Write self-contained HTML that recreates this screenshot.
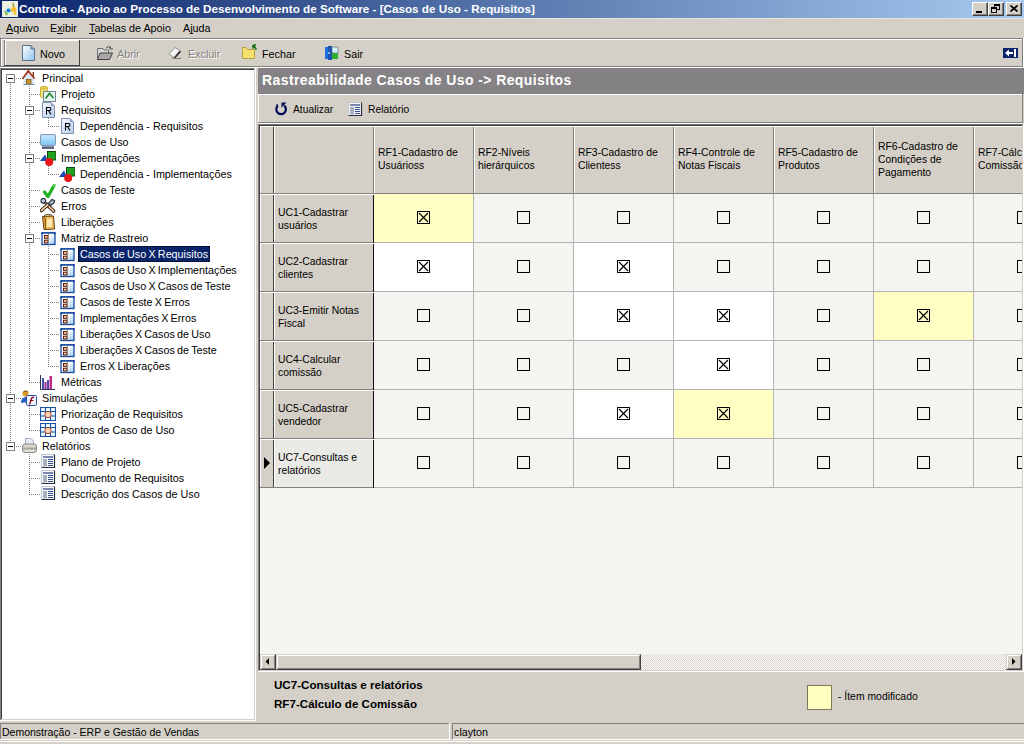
<!DOCTYPE html><html><head><meta charset="utf-8"><style>
*{margin:0;padding:0;box-sizing:border-box}
html,body{width:1024px;height:744px;overflow:hidden;background:#D4D0C8;font-family:"Liberation Sans",sans-serif;font-size:10.75px;color:#000}
.ab{position:absolute}
.t{position:absolute;white-space:nowrap;line-height:14px}
.ln{position:absolute}
</style></head><body>

<div class="ab" style="left:0;top:0;width:1024px;height:18px;background:linear-gradient(to right,#0A246A,#A6CAF0)"></div>
<div class="ab" style="left:0px;top:18px;width:1024px;height:1px;background:#E6E4DE"></div>
<div class="t" style="left:19px;top:2px;color:#fff;font-weight:bold;font-size:11.7px;line-height:14px">Controla - Apoio ao Processo de Desenvolvimento de Software - [Casos de Uso - Requisitos]</div>
<svg class="ab" style="left:2px;top:1px" width="16" height="16"><rect width="16" height="16" fill="#EEF0E2"/><path d="M11 2 L12 8" stroke="#B0A040" stroke-width="1.6"/><ellipse cx="11.5" cy="8.5" rx="3" ry="2.6" fill="#F4C030"/><circle cx="13" cy="12.5" r="1.5" fill="#F0C838"/><path d="M3 10 L5 14" stroke="#80B040" stroke-width="2"/><circle cx="6.5" cy="9.5" r="2.8" fill="#B0F0F8" opacity="0.7"/><circle cx="6.5" cy="9.5" r="2" fill="#1A80D0"/></svg>
<div class="ab" style="left:972px;top:2px;width:16px;height:14px;background:#D4D0C8;border-top:1px solid #fff;border-left:1px solid #fff;border-right:1px solid #404040;border-bottom:1px solid #404040;box-shadow:inset -1px -1px #808080"></div>
<div class="ab" style="left:988px;top:2px;width:16px;height:14px;background:#D4D0C8;border-top:1px solid #fff;border-left:1px solid #fff;border-right:1px solid #404040;border-bottom:1px solid #404040;box-shadow:inset -1px -1px #808080"></div>
<div class="ab" style="left:1006px;top:2px;width:16px;height:14px;background:#D4D0C8;border-top:1px solid #fff;border-left:1px solid #fff;border-right:1px solid #404040;border-bottom:1px solid #404040;box-shadow:inset -1px -1px #808080"></div>
<div class="ab" style="left:976px;top:11px;width:6px;height:2px;background:#000"></div>
<div class="ab" style="left:994px;top:4px;width:6px;height:2px;background:#000"></div>
<div class="ab" style="left:994px;top:4px;width:1px;height:6px;background:#000"></div>
<div class="ab" style="left:999px;top:4px;width:1px;height:6px;background:#000"></div>
<div class="ab" style="left:994px;top:9px;width:6px;height:1px;background:#000"></div>
<div class="ab" style="left:991px;top:7px;width:6px;height:6px;background:#D4D0C8"></div>
<div class="ab" style="left:991px;top:7px;width:6px;height:2px;background:#000"></div>
<div class="ab" style="left:991px;top:7px;width:1px;height:6px;background:#000"></div>
<div class="ab" style="left:996px;top:7px;width:1px;height:6px;background:#000"></div>
<div class="ab" style="left:991px;top:12px;width:6px;height:1px;background:#000"></div>
<svg class="ab" style="left:1010px;top:5px" width="8" height="7"><path d="M0.5 0.5L7.5 6.5M7.5 0.5L0.5 6.5" stroke="#000" stroke-width="1.7"/></svg>
<div class="t" style="left:6px;top:21px">Aquivo</div>
<div class="t" style="left:50px;top:21px">Exibir</div>
<div class="t" style="left:89px;top:21px">Tabelas de Apoio</div>
<div class="t" style="left:183px;top:21px">Ajuda</div>
<div class="ab" style="left:6px;top:33px;width:7px;height:1px;background:#000"></div>
<div class="ab" style="left:57px;top:33px;width:6px;height:1px;background:#000"></div>
<div class="ab" style="left:89px;top:33px;width:6px;height:1px;background:#000"></div>
<div class="ab" style="left:190px;top:33px;width:3px;height:1px;background:#000"></div>
<div class="ab" style="left:0px;top:38px;width:1023px;height:1px;background:#808080"></div>
<div class="ab" style="left:1px;top:39px;width:1021px;height:1px;background:#fff"></div>
<div class="ab" style="left:0px;top:38px;width:1px;height:29px;background:#808080"></div>
<div class="ab" style="left:1px;top:39px;width:1px;height:27px;background:#fff"></div>
<div class="ab" style="left:0px;top:66px;width:1023px;height:1px;background:#808080"></div>
<div class="ab" style="left:0px;top:67px;width:1024px;height:1px;background:#fff"></div>
<div class="ab" style="left:1022px;top:38px;width:1px;height:29px;background:#808080"></div>
<div class="ab" style="left:1023px;top:38px;width:1px;height:30px;background:#fff"></div>
<div class="ab" style="left:4px;top:40px;width:1px;height:26px;background:#808080"></div>
<div class="ab" style="left:5px;top:40px;width:1px;height:25px;background:#fff"></div>
<div class="ab" style="left:5px;top:40px;width:74px;height:1px;background:#fff"></div>
<div class="ab" style="left:79px;top:40px;width:1px;height:26px;background:#404040"></div>
<div class="ab" style="left:4px;top:65px;width:76px;height:1px;background:#404040"></div>
<svg class="ab" style="left:22px;top:45px" width="14" height="16"><defs><linearGradient id="ng" x1="0" y1="0" x2="1" y2="1"><stop offset="0" stop-color="#fff"/><stop offset="1" stop-color="#8EC4EE"/></linearGradient></defs><path d="M0.5 0.5H9L12.5 4V15.5H0.5Z" fill="url(#ng)" stroke="#5A7090"/><path d="M9 0.5V4H12.5" fill="#9AB0C8" stroke="#5A7090"/></svg>
<div class="t" style="left:40px;top:47px">Novo</div>
<svg class="ab" style="left:97px;top:45px" width="17" height="16"><path d="M0.5 3.5H6L7 5H11.5V14.5H0.5Z" fill="#D8D8D8" stroke="#707070"/><path d="M0.5 14.5L3 8H15.5L12.5 14.5Z" fill="#A8A8A8" stroke="#404040"/><path d="M9 3 Q12 0 14 3" stroke="#505050" fill="none"/><path d="M13 1V4H16" stroke="#505050" fill="none"/></svg>
<div class="t" style="left:117px;top:47px;color:#808080;text-shadow:1px 1px #fff">Abrir</div>
<svg class="ab" style="left:168px;top:46px" width="15" height="13"><path d="M1 8 L7 1.5 L12 4.5 L6 11.5 Z" fill="#F4F4F4" stroke="#909090"/><path d="M12 4.5 L13 6 L7 12.5 L6 11.5Z" fill="#303030"/><path d="M4 12.5H13" stroke="#808080"/></svg>
<div class="t" style="left:188px;top:47px;color:#808080;text-shadow:1px 1px #fff">Excluir</div>
<svg class="ab" style="left:241px;top:44px" width="17" height="16"><path d="M1.5 6.5V3.5H5L6.5 5.5H13.5V14.5H1.5Z" fill="#F8E070" stroke="#B8A040"/><path d="M12.5 1.5 L15.5 5.5" stroke="#0A6A0A" stroke-width="1.5"/><path d="M12 1H15M12 1V4.5" stroke="#0A6A0A" stroke-width="1.5" fill="none"/><path d="M11 0 L16 0 L16 6" stroke="#A0E8A0" stroke-width="0.6" fill="none" opacity="0.6"/></svg>
<div class="t" style="left:262px;top:47px">Fechar</div>
<svg class="ab" style="left:325px;top:46px" width="14" height="14"><rect x="0" y="1" width="7" height="12" fill="#1A70E0"/><rect x="3" y="0" width="4" height="14" fill="#2050B0"/><rect x="7" y="1" width="6" height="6" fill="#D0F4FF" stroke="#4A6070" stroke-width="0.6"/><rect x="7" y="7" width="6" height="6" fill="#30B030"/><circle cx="4" cy="7" r="0.9" fill="#C0F0FF"/></svg>
<div class="t" style="left:344px;top:47px">Sair</div>
<svg class="ab" style="left:1003px;top:48px" width="15" height="10"><rect width="15" height="10" fill="#0A246A"/><path d="M3 5H10" stroke="#fff" stroke-width="2"/><path d="M2 5L6 1.5V8.5Z" fill="#fff"/><rect x="11" y="1" width="2" height="8" fill="#fff"/></svg>
<div class="ab" style="left:0px;top:68px;width:256px;height:653px;background:#fff"></div>
<div class="ab" style="left:0px;top:68px;width:256px;height:1px;background:#808080"></div>
<div class="ab" style="left:0px;top:68px;width:1px;height:653px;background:#808080"></div>
<div class="ab" style="left:1px;top:69px;width:254px;height:1px;background:#404040"></div>
<div class="ab" style="left:1px;top:69px;width:1px;height:651px;background:#404040"></div>
<div class="ab" style="left:255px;top:68px;width:1px;height:653px;background:#fff"></div>
<div class="ab" style="left:0px;top:720px;width:256px;height:1px;background:#fff"></div>
<div class="ab" style="left:254px;top:69px;width:1px;height:651px;background:#D4D0C8"></div>
<div class="ab" style="left:1px;top:719px;width:254px;height:1px;background:#D4D0C8"></div>
<div class="ab" style="left:10px;top:84px;width:1px;height:1px;background:#808080"></div>
<div class="ab" style="left:10px;top:86px;width:1px;height:1px;background:#808080"></div>
<div class="ab" style="left:10px;top:88px;width:1px;height:1px;background:#808080"></div>
<div class="ab" style="left:10px;top:90px;width:1px;height:1px;background:#808080"></div>
<div class="ab" style="left:10px;top:92px;width:1px;height:1px;background:#808080"></div>
<div class="ab" style="left:10px;top:94px;width:1px;height:1px;background:#808080"></div>
<div class="ab" style="left:10px;top:96px;width:1px;height:1px;background:#808080"></div>
<div class="ab" style="left:10px;top:98px;width:1px;height:1px;background:#808080"></div>
<div class="ab" style="left:10px;top:100px;width:1px;height:1px;background:#808080"></div>
<div class="ab" style="left:10px;top:102px;width:1px;height:1px;background:#808080"></div>
<div class="ab" style="left:10px;top:104px;width:1px;height:1px;background:#808080"></div>
<div class="ab" style="left:10px;top:106px;width:1px;height:1px;background:#808080"></div>
<div class="ab" style="left:10px;top:108px;width:1px;height:1px;background:#808080"></div>
<div class="ab" style="left:10px;top:110px;width:1px;height:1px;background:#808080"></div>
<div class="ab" style="left:10px;top:112px;width:1px;height:1px;background:#808080"></div>
<div class="ab" style="left:10px;top:114px;width:1px;height:1px;background:#808080"></div>
<div class="ab" style="left:10px;top:116px;width:1px;height:1px;background:#808080"></div>
<div class="ab" style="left:10px;top:118px;width:1px;height:1px;background:#808080"></div>
<div class="ab" style="left:10px;top:120px;width:1px;height:1px;background:#808080"></div>
<div class="ab" style="left:10px;top:122px;width:1px;height:1px;background:#808080"></div>
<div class="ab" style="left:10px;top:124px;width:1px;height:1px;background:#808080"></div>
<div class="ab" style="left:10px;top:126px;width:1px;height:1px;background:#808080"></div>
<div class="ab" style="left:10px;top:128px;width:1px;height:1px;background:#808080"></div>
<div class="ab" style="left:10px;top:130px;width:1px;height:1px;background:#808080"></div>
<div class="ab" style="left:10px;top:132px;width:1px;height:1px;background:#808080"></div>
<div class="ab" style="left:10px;top:134px;width:1px;height:1px;background:#808080"></div>
<div class="ab" style="left:10px;top:136px;width:1px;height:1px;background:#808080"></div>
<div class="ab" style="left:10px;top:138px;width:1px;height:1px;background:#808080"></div>
<div class="ab" style="left:10px;top:140px;width:1px;height:1px;background:#808080"></div>
<div class="ab" style="left:10px;top:142px;width:1px;height:1px;background:#808080"></div>
<div class="ab" style="left:10px;top:144px;width:1px;height:1px;background:#808080"></div>
<div class="ab" style="left:10px;top:146px;width:1px;height:1px;background:#808080"></div>
<div class="ab" style="left:10px;top:148px;width:1px;height:1px;background:#808080"></div>
<div class="ab" style="left:10px;top:150px;width:1px;height:1px;background:#808080"></div>
<div class="ab" style="left:10px;top:152px;width:1px;height:1px;background:#808080"></div>
<div class="ab" style="left:10px;top:154px;width:1px;height:1px;background:#808080"></div>
<div class="ab" style="left:10px;top:156px;width:1px;height:1px;background:#808080"></div>
<div class="ab" style="left:10px;top:158px;width:1px;height:1px;background:#808080"></div>
<div class="ab" style="left:10px;top:160px;width:1px;height:1px;background:#808080"></div>
<div class="ab" style="left:10px;top:162px;width:1px;height:1px;background:#808080"></div>
<div class="ab" style="left:10px;top:164px;width:1px;height:1px;background:#808080"></div>
<div class="ab" style="left:10px;top:166px;width:1px;height:1px;background:#808080"></div>
<div class="ab" style="left:10px;top:168px;width:1px;height:1px;background:#808080"></div>
<div class="ab" style="left:10px;top:170px;width:1px;height:1px;background:#808080"></div>
<div class="ab" style="left:10px;top:172px;width:1px;height:1px;background:#808080"></div>
<div class="ab" style="left:10px;top:174px;width:1px;height:1px;background:#808080"></div>
<div class="ab" style="left:10px;top:176px;width:1px;height:1px;background:#808080"></div>
<div class="ab" style="left:10px;top:178px;width:1px;height:1px;background:#808080"></div>
<div class="ab" style="left:10px;top:180px;width:1px;height:1px;background:#808080"></div>
<div class="ab" style="left:10px;top:182px;width:1px;height:1px;background:#808080"></div>
<div class="ab" style="left:10px;top:184px;width:1px;height:1px;background:#808080"></div>
<div class="ab" style="left:10px;top:186px;width:1px;height:1px;background:#808080"></div>
<div class="ab" style="left:10px;top:188px;width:1px;height:1px;background:#808080"></div>
<div class="ab" style="left:10px;top:190px;width:1px;height:1px;background:#808080"></div>
<div class="ab" style="left:10px;top:192px;width:1px;height:1px;background:#808080"></div>
<div class="ab" style="left:10px;top:194px;width:1px;height:1px;background:#808080"></div>
<div class="ab" style="left:10px;top:196px;width:1px;height:1px;background:#808080"></div>
<div class="ab" style="left:10px;top:198px;width:1px;height:1px;background:#808080"></div>
<div class="ab" style="left:10px;top:200px;width:1px;height:1px;background:#808080"></div>
<div class="ab" style="left:10px;top:202px;width:1px;height:1px;background:#808080"></div>
<div class="ab" style="left:10px;top:204px;width:1px;height:1px;background:#808080"></div>
<div class="ab" style="left:10px;top:206px;width:1px;height:1px;background:#808080"></div>
<div class="ab" style="left:10px;top:208px;width:1px;height:1px;background:#808080"></div>
<div class="ab" style="left:10px;top:210px;width:1px;height:1px;background:#808080"></div>
<div class="ab" style="left:10px;top:212px;width:1px;height:1px;background:#808080"></div>
<div class="ab" style="left:10px;top:214px;width:1px;height:1px;background:#808080"></div>
<div class="ab" style="left:10px;top:216px;width:1px;height:1px;background:#808080"></div>
<div class="ab" style="left:10px;top:218px;width:1px;height:1px;background:#808080"></div>
<div class="ab" style="left:10px;top:220px;width:1px;height:1px;background:#808080"></div>
<div class="ab" style="left:10px;top:222px;width:1px;height:1px;background:#808080"></div>
<div class="ab" style="left:10px;top:224px;width:1px;height:1px;background:#808080"></div>
<div class="ab" style="left:10px;top:226px;width:1px;height:1px;background:#808080"></div>
<div class="ab" style="left:10px;top:228px;width:1px;height:1px;background:#808080"></div>
<div class="ab" style="left:10px;top:230px;width:1px;height:1px;background:#808080"></div>
<div class="ab" style="left:10px;top:232px;width:1px;height:1px;background:#808080"></div>
<div class="ab" style="left:10px;top:234px;width:1px;height:1px;background:#808080"></div>
<div class="ab" style="left:10px;top:236px;width:1px;height:1px;background:#808080"></div>
<div class="ab" style="left:10px;top:238px;width:1px;height:1px;background:#808080"></div>
<div class="ab" style="left:10px;top:240px;width:1px;height:1px;background:#808080"></div>
<div class="ab" style="left:10px;top:242px;width:1px;height:1px;background:#808080"></div>
<div class="ab" style="left:10px;top:244px;width:1px;height:1px;background:#808080"></div>
<div class="ab" style="left:10px;top:246px;width:1px;height:1px;background:#808080"></div>
<div class="ab" style="left:10px;top:248px;width:1px;height:1px;background:#808080"></div>
<div class="ab" style="left:10px;top:250px;width:1px;height:1px;background:#808080"></div>
<div class="ab" style="left:10px;top:252px;width:1px;height:1px;background:#808080"></div>
<div class="ab" style="left:10px;top:254px;width:1px;height:1px;background:#808080"></div>
<div class="ab" style="left:10px;top:256px;width:1px;height:1px;background:#808080"></div>
<div class="ab" style="left:10px;top:258px;width:1px;height:1px;background:#808080"></div>
<div class="ab" style="left:10px;top:260px;width:1px;height:1px;background:#808080"></div>
<div class="ab" style="left:10px;top:262px;width:1px;height:1px;background:#808080"></div>
<div class="ab" style="left:10px;top:264px;width:1px;height:1px;background:#808080"></div>
<div class="ab" style="left:10px;top:266px;width:1px;height:1px;background:#808080"></div>
<div class="ab" style="left:10px;top:268px;width:1px;height:1px;background:#808080"></div>
<div class="ab" style="left:10px;top:270px;width:1px;height:1px;background:#808080"></div>
<div class="ab" style="left:10px;top:272px;width:1px;height:1px;background:#808080"></div>
<div class="ab" style="left:10px;top:274px;width:1px;height:1px;background:#808080"></div>
<div class="ab" style="left:10px;top:276px;width:1px;height:1px;background:#808080"></div>
<div class="ab" style="left:10px;top:278px;width:1px;height:1px;background:#808080"></div>
<div class="ab" style="left:10px;top:280px;width:1px;height:1px;background:#808080"></div>
<div class="ab" style="left:10px;top:282px;width:1px;height:1px;background:#808080"></div>
<div class="ab" style="left:10px;top:284px;width:1px;height:1px;background:#808080"></div>
<div class="ab" style="left:10px;top:286px;width:1px;height:1px;background:#808080"></div>
<div class="ab" style="left:10px;top:288px;width:1px;height:1px;background:#808080"></div>
<div class="ab" style="left:10px;top:290px;width:1px;height:1px;background:#808080"></div>
<div class="ab" style="left:10px;top:292px;width:1px;height:1px;background:#808080"></div>
<div class="ab" style="left:10px;top:294px;width:1px;height:1px;background:#808080"></div>
<div class="ab" style="left:10px;top:296px;width:1px;height:1px;background:#808080"></div>
<div class="ab" style="left:10px;top:298px;width:1px;height:1px;background:#808080"></div>
<div class="ab" style="left:10px;top:300px;width:1px;height:1px;background:#808080"></div>
<div class="ab" style="left:10px;top:302px;width:1px;height:1px;background:#808080"></div>
<div class="ab" style="left:10px;top:304px;width:1px;height:1px;background:#808080"></div>
<div class="ab" style="left:10px;top:306px;width:1px;height:1px;background:#808080"></div>
<div class="ab" style="left:10px;top:308px;width:1px;height:1px;background:#808080"></div>
<div class="ab" style="left:10px;top:310px;width:1px;height:1px;background:#808080"></div>
<div class="ab" style="left:10px;top:312px;width:1px;height:1px;background:#808080"></div>
<div class="ab" style="left:10px;top:314px;width:1px;height:1px;background:#808080"></div>
<div class="ab" style="left:10px;top:316px;width:1px;height:1px;background:#808080"></div>
<div class="ab" style="left:10px;top:318px;width:1px;height:1px;background:#808080"></div>
<div class="ab" style="left:10px;top:320px;width:1px;height:1px;background:#808080"></div>
<div class="ab" style="left:10px;top:322px;width:1px;height:1px;background:#808080"></div>
<div class="ab" style="left:10px;top:324px;width:1px;height:1px;background:#808080"></div>
<div class="ab" style="left:10px;top:326px;width:1px;height:1px;background:#808080"></div>
<div class="ab" style="left:10px;top:328px;width:1px;height:1px;background:#808080"></div>
<div class="ab" style="left:10px;top:330px;width:1px;height:1px;background:#808080"></div>
<div class="ab" style="left:10px;top:332px;width:1px;height:1px;background:#808080"></div>
<div class="ab" style="left:10px;top:334px;width:1px;height:1px;background:#808080"></div>
<div class="ab" style="left:10px;top:336px;width:1px;height:1px;background:#808080"></div>
<div class="ab" style="left:10px;top:338px;width:1px;height:1px;background:#808080"></div>
<div class="ab" style="left:10px;top:340px;width:1px;height:1px;background:#808080"></div>
<div class="ab" style="left:10px;top:342px;width:1px;height:1px;background:#808080"></div>
<div class="ab" style="left:10px;top:344px;width:1px;height:1px;background:#808080"></div>
<div class="ab" style="left:10px;top:346px;width:1px;height:1px;background:#808080"></div>
<div class="ab" style="left:10px;top:348px;width:1px;height:1px;background:#808080"></div>
<div class="ab" style="left:10px;top:350px;width:1px;height:1px;background:#808080"></div>
<div class="ab" style="left:10px;top:352px;width:1px;height:1px;background:#808080"></div>
<div class="ab" style="left:10px;top:354px;width:1px;height:1px;background:#808080"></div>
<div class="ab" style="left:10px;top:356px;width:1px;height:1px;background:#808080"></div>
<div class="ab" style="left:10px;top:358px;width:1px;height:1px;background:#808080"></div>
<div class="ab" style="left:10px;top:360px;width:1px;height:1px;background:#808080"></div>
<div class="ab" style="left:10px;top:362px;width:1px;height:1px;background:#808080"></div>
<div class="ab" style="left:10px;top:364px;width:1px;height:1px;background:#808080"></div>
<div class="ab" style="left:10px;top:366px;width:1px;height:1px;background:#808080"></div>
<div class="ab" style="left:10px;top:368px;width:1px;height:1px;background:#808080"></div>
<div class="ab" style="left:10px;top:370px;width:1px;height:1px;background:#808080"></div>
<div class="ab" style="left:10px;top:372px;width:1px;height:1px;background:#808080"></div>
<div class="ab" style="left:10px;top:374px;width:1px;height:1px;background:#808080"></div>
<div class="ab" style="left:10px;top:376px;width:1px;height:1px;background:#808080"></div>
<div class="ab" style="left:10px;top:378px;width:1px;height:1px;background:#808080"></div>
<div class="ab" style="left:10px;top:380px;width:1px;height:1px;background:#808080"></div>
<div class="ab" style="left:10px;top:382px;width:1px;height:1px;background:#808080"></div>
<div class="ab" style="left:10px;top:384px;width:1px;height:1px;background:#808080"></div>
<div class="ab" style="left:10px;top:386px;width:1px;height:1px;background:#808080"></div>
<div class="ab" style="left:10px;top:388px;width:1px;height:1px;background:#808080"></div>
<div class="ab" style="left:10px;top:390px;width:1px;height:1px;background:#808080"></div>
<div class="ab" style="left:10px;top:392px;width:1px;height:1px;background:#808080"></div>
<div class="ab" style="left:10px;top:394px;width:1px;height:1px;background:#808080"></div>
<div class="ab" style="left:10px;top:396px;width:1px;height:1px;background:#808080"></div>
<div class="ab" style="left:10px;top:398px;width:1px;height:1px;background:#808080"></div>
<div class="ab" style="left:10px;top:400px;width:1px;height:1px;background:#808080"></div>
<div class="ab" style="left:10px;top:402px;width:1px;height:1px;background:#808080"></div>
<div class="ab" style="left:10px;top:404px;width:1px;height:1px;background:#808080"></div>
<div class="ab" style="left:10px;top:406px;width:1px;height:1px;background:#808080"></div>
<div class="ab" style="left:10px;top:408px;width:1px;height:1px;background:#808080"></div>
<div class="ab" style="left:10px;top:410px;width:1px;height:1px;background:#808080"></div>
<div class="ab" style="left:10px;top:412px;width:1px;height:1px;background:#808080"></div>
<div class="ab" style="left:10px;top:414px;width:1px;height:1px;background:#808080"></div>
<div class="ab" style="left:10px;top:416px;width:1px;height:1px;background:#808080"></div>
<div class="ab" style="left:10px;top:418px;width:1px;height:1px;background:#808080"></div>
<div class="ab" style="left:10px;top:420px;width:1px;height:1px;background:#808080"></div>
<div class="ab" style="left:10px;top:422px;width:1px;height:1px;background:#808080"></div>
<div class="ab" style="left:10px;top:424px;width:1px;height:1px;background:#808080"></div>
<div class="ab" style="left:10px;top:426px;width:1px;height:1px;background:#808080"></div>
<div class="ab" style="left:10px;top:428px;width:1px;height:1px;background:#808080"></div>
<div class="ab" style="left:10px;top:430px;width:1px;height:1px;background:#808080"></div>
<div class="ab" style="left:10px;top:432px;width:1px;height:1px;background:#808080"></div>
<div class="ab" style="left:10px;top:434px;width:1px;height:1px;background:#808080"></div>
<div class="ab" style="left:10px;top:436px;width:1px;height:1px;background:#808080"></div>
<div class="ab" style="left:10px;top:438px;width:1px;height:1px;background:#808080"></div>
<div class="ab" style="left:10px;top:440px;width:1px;height:1px;background:#808080"></div>
<div class="ab" style="left:16px;top:78px;width:1px;height:1px;background:#808080"></div>
<div class="ab" style="left:18px;top:78px;width:1px;height:1px;background:#808080"></div>
<div class="ab" style="left:20px;top:78px;width:1px;height:1px;background:#808080"></div>
<div class="ab" style="left:16px;top:398px;width:1px;height:1px;background:#808080"></div>
<div class="ab" style="left:18px;top:398px;width:1px;height:1px;background:#808080"></div>
<div class="ab" style="left:20px;top:398px;width:1px;height:1px;background:#808080"></div>
<div class="ab" style="left:16px;top:446px;width:1px;height:1px;background:#808080"></div>
<div class="ab" style="left:18px;top:446px;width:1px;height:1px;background:#808080"></div>
<div class="ab" style="left:20px;top:446px;width:1px;height:1px;background:#808080"></div>
<div class="ab" style="left:29px;top:86px;width:1px;height:1px;background:#808080"></div>
<div class="ab" style="left:29px;top:88px;width:1px;height:1px;background:#808080"></div>
<div class="ab" style="left:29px;top:90px;width:1px;height:1px;background:#808080"></div>
<div class="ab" style="left:29px;top:92px;width:1px;height:1px;background:#808080"></div>
<div class="ab" style="left:29px;top:94px;width:1px;height:1px;background:#808080"></div>
<div class="ab" style="left:29px;top:96px;width:1px;height:1px;background:#808080"></div>
<div class="ab" style="left:29px;top:98px;width:1px;height:1px;background:#808080"></div>
<div class="ab" style="left:29px;top:100px;width:1px;height:1px;background:#808080"></div>
<div class="ab" style="left:29px;top:102px;width:1px;height:1px;background:#808080"></div>
<div class="ab" style="left:29px;top:104px;width:1px;height:1px;background:#808080"></div>
<div class="ab" style="left:29px;top:106px;width:1px;height:1px;background:#808080"></div>
<div class="ab" style="left:29px;top:108px;width:1px;height:1px;background:#808080"></div>
<div class="ab" style="left:29px;top:110px;width:1px;height:1px;background:#808080"></div>
<div class="ab" style="left:29px;top:112px;width:1px;height:1px;background:#808080"></div>
<div class="ab" style="left:29px;top:114px;width:1px;height:1px;background:#808080"></div>
<div class="ab" style="left:29px;top:116px;width:1px;height:1px;background:#808080"></div>
<div class="ab" style="left:29px;top:118px;width:1px;height:1px;background:#808080"></div>
<div class="ab" style="left:29px;top:120px;width:1px;height:1px;background:#808080"></div>
<div class="ab" style="left:29px;top:122px;width:1px;height:1px;background:#808080"></div>
<div class="ab" style="left:29px;top:124px;width:1px;height:1px;background:#808080"></div>
<div class="ab" style="left:29px;top:126px;width:1px;height:1px;background:#808080"></div>
<div class="ab" style="left:29px;top:128px;width:1px;height:1px;background:#808080"></div>
<div class="ab" style="left:29px;top:130px;width:1px;height:1px;background:#808080"></div>
<div class="ab" style="left:29px;top:132px;width:1px;height:1px;background:#808080"></div>
<div class="ab" style="left:29px;top:134px;width:1px;height:1px;background:#808080"></div>
<div class="ab" style="left:29px;top:136px;width:1px;height:1px;background:#808080"></div>
<div class="ab" style="left:29px;top:138px;width:1px;height:1px;background:#808080"></div>
<div class="ab" style="left:29px;top:140px;width:1px;height:1px;background:#808080"></div>
<div class="ab" style="left:29px;top:142px;width:1px;height:1px;background:#808080"></div>
<div class="ab" style="left:29px;top:144px;width:1px;height:1px;background:#808080"></div>
<div class="ab" style="left:29px;top:146px;width:1px;height:1px;background:#808080"></div>
<div class="ab" style="left:29px;top:148px;width:1px;height:1px;background:#808080"></div>
<div class="ab" style="left:29px;top:150px;width:1px;height:1px;background:#808080"></div>
<div class="ab" style="left:29px;top:152px;width:1px;height:1px;background:#808080"></div>
<div class="ab" style="left:29px;top:154px;width:1px;height:1px;background:#808080"></div>
<div class="ab" style="left:29px;top:156px;width:1px;height:1px;background:#808080"></div>
<div class="ab" style="left:29px;top:158px;width:1px;height:1px;background:#808080"></div>
<div class="ab" style="left:29px;top:160px;width:1px;height:1px;background:#808080"></div>
<div class="ab" style="left:29px;top:162px;width:1px;height:1px;background:#808080"></div>
<div class="ab" style="left:29px;top:164px;width:1px;height:1px;background:#808080"></div>
<div class="ab" style="left:29px;top:166px;width:1px;height:1px;background:#808080"></div>
<div class="ab" style="left:29px;top:168px;width:1px;height:1px;background:#808080"></div>
<div class="ab" style="left:29px;top:170px;width:1px;height:1px;background:#808080"></div>
<div class="ab" style="left:29px;top:172px;width:1px;height:1px;background:#808080"></div>
<div class="ab" style="left:29px;top:174px;width:1px;height:1px;background:#808080"></div>
<div class="ab" style="left:29px;top:176px;width:1px;height:1px;background:#808080"></div>
<div class="ab" style="left:29px;top:178px;width:1px;height:1px;background:#808080"></div>
<div class="ab" style="left:29px;top:180px;width:1px;height:1px;background:#808080"></div>
<div class="ab" style="left:29px;top:182px;width:1px;height:1px;background:#808080"></div>
<div class="ab" style="left:29px;top:184px;width:1px;height:1px;background:#808080"></div>
<div class="ab" style="left:29px;top:186px;width:1px;height:1px;background:#808080"></div>
<div class="ab" style="left:29px;top:188px;width:1px;height:1px;background:#808080"></div>
<div class="ab" style="left:29px;top:190px;width:1px;height:1px;background:#808080"></div>
<div class="ab" style="left:29px;top:192px;width:1px;height:1px;background:#808080"></div>
<div class="ab" style="left:29px;top:194px;width:1px;height:1px;background:#808080"></div>
<div class="ab" style="left:29px;top:196px;width:1px;height:1px;background:#808080"></div>
<div class="ab" style="left:29px;top:198px;width:1px;height:1px;background:#808080"></div>
<div class="ab" style="left:29px;top:200px;width:1px;height:1px;background:#808080"></div>
<div class="ab" style="left:29px;top:202px;width:1px;height:1px;background:#808080"></div>
<div class="ab" style="left:29px;top:204px;width:1px;height:1px;background:#808080"></div>
<div class="ab" style="left:29px;top:206px;width:1px;height:1px;background:#808080"></div>
<div class="ab" style="left:29px;top:208px;width:1px;height:1px;background:#808080"></div>
<div class="ab" style="left:29px;top:210px;width:1px;height:1px;background:#808080"></div>
<div class="ab" style="left:29px;top:212px;width:1px;height:1px;background:#808080"></div>
<div class="ab" style="left:29px;top:214px;width:1px;height:1px;background:#808080"></div>
<div class="ab" style="left:29px;top:216px;width:1px;height:1px;background:#808080"></div>
<div class="ab" style="left:29px;top:218px;width:1px;height:1px;background:#808080"></div>
<div class="ab" style="left:29px;top:220px;width:1px;height:1px;background:#808080"></div>
<div class="ab" style="left:29px;top:222px;width:1px;height:1px;background:#808080"></div>
<div class="ab" style="left:29px;top:224px;width:1px;height:1px;background:#808080"></div>
<div class="ab" style="left:29px;top:226px;width:1px;height:1px;background:#808080"></div>
<div class="ab" style="left:29px;top:228px;width:1px;height:1px;background:#808080"></div>
<div class="ab" style="left:29px;top:230px;width:1px;height:1px;background:#808080"></div>
<div class="ab" style="left:29px;top:232px;width:1px;height:1px;background:#808080"></div>
<div class="ab" style="left:29px;top:234px;width:1px;height:1px;background:#808080"></div>
<div class="ab" style="left:29px;top:236px;width:1px;height:1px;background:#808080"></div>
<div class="ab" style="left:29px;top:238px;width:1px;height:1px;background:#808080"></div>
<div class="ab" style="left:29px;top:240px;width:1px;height:1px;background:#808080"></div>
<div class="ab" style="left:29px;top:242px;width:1px;height:1px;background:#808080"></div>
<div class="ab" style="left:29px;top:244px;width:1px;height:1px;background:#808080"></div>
<div class="ab" style="left:29px;top:246px;width:1px;height:1px;background:#808080"></div>
<div class="ab" style="left:29px;top:248px;width:1px;height:1px;background:#808080"></div>
<div class="ab" style="left:29px;top:250px;width:1px;height:1px;background:#808080"></div>
<div class="ab" style="left:29px;top:252px;width:1px;height:1px;background:#808080"></div>
<div class="ab" style="left:29px;top:254px;width:1px;height:1px;background:#808080"></div>
<div class="ab" style="left:29px;top:256px;width:1px;height:1px;background:#808080"></div>
<div class="ab" style="left:29px;top:258px;width:1px;height:1px;background:#808080"></div>
<div class="ab" style="left:29px;top:260px;width:1px;height:1px;background:#808080"></div>
<div class="ab" style="left:29px;top:262px;width:1px;height:1px;background:#808080"></div>
<div class="ab" style="left:29px;top:264px;width:1px;height:1px;background:#808080"></div>
<div class="ab" style="left:29px;top:266px;width:1px;height:1px;background:#808080"></div>
<div class="ab" style="left:29px;top:268px;width:1px;height:1px;background:#808080"></div>
<div class="ab" style="left:29px;top:270px;width:1px;height:1px;background:#808080"></div>
<div class="ab" style="left:29px;top:272px;width:1px;height:1px;background:#808080"></div>
<div class="ab" style="left:29px;top:274px;width:1px;height:1px;background:#808080"></div>
<div class="ab" style="left:29px;top:276px;width:1px;height:1px;background:#808080"></div>
<div class="ab" style="left:29px;top:278px;width:1px;height:1px;background:#808080"></div>
<div class="ab" style="left:29px;top:280px;width:1px;height:1px;background:#808080"></div>
<div class="ab" style="left:29px;top:282px;width:1px;height:1px;background:#808080"></div>
<div class="ab" style="left:29px;top:284px;width:1px;height:1px;background:#808080"></div>
<div class="ab" style="left:29px;top:286px;width:1px;height:1px;background:#808080"></div>
<div class="ab" style="left:29px;top:288px;width:1px;height:1px;background:#808080"></div>
<div class="ab" style="left:29px;top:290px;width:1px;height:1px;background:#808080"></div>
<div class="ab" style="left:29px;top:292px;width:1px;height:1px;background:#808080"></div>
<div class="ab" style="left:29px;top:294px;width:1px;height:1px;background:#808080"></div>
<div class="ab" style="left:29px;top:296px;width:1px;height:1px;background:#808080"></div>
<div class="ab" style="left:29px;top:298px;width:1px;height:1px;background:#808080"></div>
<div class="ab" style="left:29px;top:300px;width:1px;height:1px;background:#808080"></div>
<div class="ab" style="left:29px;top:302px;width:1px;height:1px;background:#808080"></div>
<div class="ab" style="left:29px;top:304px;width:1px;height:1px;background:#808080"></div>
<div class="ab" style="left:29px;top:306px;width:1px;height:1px;background:#808080"></div>
<div class="ab" style="left:29px;top:308px;width:1px;height:1px;background:#808080"></div>
<div class="ab" style="left:29px;top:310px;width:1px;height:1px;background:#808080"></div>
<div class="ab" style="left:29px;top:312px;width:1px;height:1px;background:#808080"></div>
<div class="ab" style="left:29px;top:314px;width:1px;height:1px;background:#808080"></div>
<div class="ab" style="left:29px;top:316px;width:1px;height:1px;background:#808080"></div>
<div class="ab" style="left:29px;top:318px;width:1px;height:1px;background:#808080"></div>
<div class="ab" style="left:29px;top:320px;width:1px;height:1px;background:#808080"></div>
<div class="ab" style="left:29px;top:322px;width:1px;height:1px;background:#808080"></div>
<div class="ab" style="left:29px;top:324px;width:1px;height:1px;background:#808080"></div>
<div class="ab" style="left:29px;top:326px;width:1px;height:1px;background:#808080"></div>
<div class="ab" style="left:29px;top:328px;width:1px;height:1px;background:#808080"></div>
<div class="ab" style="left:29px;top:330px;width:1px;height:1px;background:#808080"></div>
<div class="ab" style="left:29px;top:332px;width:1px;height:1px;background:#808080"></div>
<div class="ab" style="left:29px;top:334px;width:1px;height:1px;background:#808080"></div>
<div class="ab" style="left:29px;top:336px;width:1px;height:1px;background:#808080"></div>
<div class="ab" style="left:29px;top:338px;width:1px;height:1px;background:#808080"></div>
<div class="ab" style="left:29px;top:340px;width:1px;height:1px;background:#808080"></div>
<div class="ab" style="left:29px;top:342px;width:1px;height:1px;background:#808080"></div>
<div class="ab" style="left:29px;top:344px;width:1px;height:1px;background:#808080"></div>
<div class="ab" style="left:29px;top:346px;width:1px;height:1px;background:#808080"></div>
<div class="ab" style="left:29px;top:348px;width:1px;height:1px;background:#808080"></div>
<div class="ab" style="left:29px;top:350px;width:1px;height:1px;background:#808080"></div>
<div class="ab" style="left:29px;top:352px;width:1px;height:1px;background:#808080"></div>
<div class="ab" style="left:29px;top:354px;width:1px;height:1px;background:#808080"></div>
<div class="ab" style="left:29px;top:356px;width:1px;height:1px;background:#808080"></div>
<div class="ab" style="left:29px;top:358px;width:1px;height:1px;background:#808080"></div>
<div class="ab" style="left:29px;top:360px;width:1px;height:1px;background:#808080"></div>
<div class="ab" style="left:29px;top:362px;width:1px;height:1px;background:#808080"></div>
<div class="ab" style="left:29px;top:364px;width:1px;height:1px;background:#808080"></div>
<div class="ab" style="left:29px;top:366px;width:1px;height:1px;background:#808080"></div>
<div class="ab" style="left:29px;top:368px;width:1px;height:1px;background:#808080"></div>
<div class="ab" style="left:29px;top:370px;width:1px;height:1px;background:#808080"></div>
<div class="ab" style="left:29px;top:372px;width:1px;height:1px;background:#808080"></div>
<div class="ab" style="left:29px;top:374px;width:1px;height:1px;background:#808080"></div>
<div class="ab" style="left:29px;top:376px;width:1px;height:1px;background:#808080"></div>
<div class="ab" style="left:29px;top:378px;width:1px;height:1px;background:#808080"></div>
<div class="ab" style="left:29px;top:380px;width:1px;height:1px;background:#808080"></div>
<div class="ab" style="left:29px;top:382px;width:1px;height:1px;background:#808080"></div>
<div class="ab" style="left:31px;top:94px;width:1px;height:1px;background:#808080"></div>
<div class="ab" style="left:33px;top:94px;width:1px;height:1px;background:#808080"></div>
<div class="ab" style="left:35px;top:94px;width:1px;height:1px;background:#808080"></div>
<div class="ab" style="left:37px;top:94px;width:1px;height:1px;background:#808080"></div>
<div class="ab" style="left:39px;top:94px;width:1px;height:1px;background:#808080"></div>
<div class="ab" style="left:35px;top:110px;width:1px;height:1px;background:#808080"></div>
<div class="ab" style="left:37px;top:110px;width:1px;height:1px;background:#808080"></div>
<div class="ab" style="left:39px;top:110px;width:1px;height:1px;background:#808080"></div>
<div class="ab" style="left:31px;top:142px;width:1px;height:1px;background:#808080"></div>
<div class="ab" style="left:33px;top:142px;width:1px;height:1px;background:#808080"></div>
<div class="ab" style="left:35px;top:142px;width:1px;height:1px;background:#808080"></div>
<div class="ab" style="left:37px;top:142px;width:1px;height:1px;background:#808080"></div>
<div class="ab" style="left:39px;top:142px;width:1px;height:1px;background:#808080"></div>
<div class="ab" style="left:35px;top:158px;width:1px;height:1px;background:#808080"></div>
<div class="ab" style="left:37px;top:158px;width:1px;height:1px;background:#808080"></div>
<div class="ab" style="left:39px;top:158px;width:1px;height:1px;background:#808080"></div>
<div class="ab" style="left:31px;top:190px;width:1px;height:1px;background:#808080"></div>
<div class="ab" style="left:33px;top:190px;width:1px;height:1px;background:#808080"></div>
<div class="ab" style="left:35px;top:190px;width:1px;height:1px;background:#808080"></div>
<div class="ab" style="left:37px;top:190px;width:1px;height:1px;background:#808080"></div>
<div class="ab" style="left:39px;top:190px;width:1px;height:1px;background:#808080"></div>
<div class="ab" style="left:31px;top:206px;width:1px;height:1px;background:#808080"></div>
<div class="ab" style="left:33px;top:206px;width:1px;height:1px;background:#808080"></div>
<div class="ab" style="left:35px;top:206px;width:1px;height:1px;background:#808080"></div>
<div class="ab" style="left:37px;top:206px;width:1px;height:1px;background:#808080"></div>
<div class="ab" style="left:39px;top:206px;width:1px;height:1px;background:#808080"></div>
<div class="ab" style="left:31px;top:222px;width:1px;height:1px;background:#808080"></div>
<div class="ab" style="left:33px;top:222px;width:1px;height:1px;background:#808080"></div>
<div class="ab" style="left:35px;top:222px;width:1px;height:1px;background:#808080"></div>
<div class="ab" style="left:37px;top:222px;width:1px;height:1px;background:#808080"></div>
<div class="ab" style="left:39px;top:222px;width:1px;height:1px;background:#808080"></div>
<div class="ab" style="left:35px;top:238px;width:1px;height:1px;background:#808080"></div>
<div class="ab" style="left:37px;top:238px;width:1px;height:1px;background:#808080"></div>
<div class="ab" style="left:39px;top:238px;width:1px;height:1px;background:#808080"></div>
<div class="ab" style="left:31px;top:382px;width:1px;height:1px;background:#808080"></div>
<div class="ab" style="left:33px;top:382px;width:1px;height:1px;background:#808080"></div>
<div class="ab" style="left:35px;top:382px;width:1px;height:1px;background:#808080"></div>
<div class="ab" style="left:37px;top:382px;width:1px;height:1px;background:#808080"></div>
<div class="ab" style="left:39px;top:382px;width:1px;height:1px;background:#808080"></div>
<div class="ab" style="left:29px;top:406px;width:1px;height:1px;background:#808080"></div>
<div class="ab" style="left:29px;top:408px;width:1px;height:1px;background:#808080"></div>
<div class="ab" style="left:29px;top:410px;width:1px;height:1px;background:#808080"></div>
<div class="ab" style="left:29px;top:412px;width:1px;height:1px;background:#808080"></div>
<div class="ab" style="left:29px;top:414px;width:1px;height:1px;background:#808080"></div>
<div class="ab" style="left:29px;top:416px;width:1px;height:1px;background:#808080"></div>
<div class="ab" style="left:29px;top:418px;width:1px;height:1px;background:#808080"></div>
<div class="ab" style="left:29px;top:420px;width:1px;height:1px;background:#808080"></div>
<div class="ab" style="left:29px;top:422px;width:1px;height:1px;background:#808080"></div>
<div class="ab" style="left:29px;top:424px;width:1px;height:1px;background:#808080"></div>
<div class="ab" style="left:29px;top:426px;width:1px;height:1px;background:#808080"></div>
<div class="ab" style="left:29px;top:428px;width:1px;height:1px;background:#808080"></div>
<div class="ab" style="left:29px;top:430px;width:1px;height:1px;background:#808080"></div>
<div class="ab" style="left:31px;top:414px;width:1px;height:1px;background:#808080"></div>
<div class="ab" style="left:33px;top:414px;width:1px;height:1px;background:#808080"></div>
<div class="ab" style="left:35px;top:414px;width:1px;height:1px;background:#808080"></div>
<div class="ab" style="left:37px;top:414px;width:1px;height:1px;background:#808080"></div>
<div class="ab" style="left:39px;top:414px;width:1px;height:1px;background:#808080"></div>
<div class="ab" style="left:31px;top:430px;width:1px;height:1px;background:#808080"></div>
<div class="ab" style="left:33px;top:430px;width:1px;height:1px;background:#808080"></div>
<div class="ab" style="left:35px;top:430px;width:1px;height:1px;background:#808080"></div>
<div class="ab" style="left:37px;top:430px;width:1px;height:1px;background:#808080"></div>
<div class="ab" style="left:39px;top:430px;width:1px;height:1px;background:#808080"></div>
<div class="ab" style="left:29px;top:454px;width:1px;height:1px;background:#808080"></div>
<div class="ab" style="left:29px;top:456px;width:1px;height:1px;background:#808080"></div>
<div class="ab" style="left:29px;top:458px;width:1px;height:1px;background:#808080"></div>
<div class="ab" style="left:29px;top:460px;width:1px;height:1px;background:#808080"></div>
<div class="ab" style="left:29px;top:462px;width:1px;height:1px;background:#808080"></div>
<div class="ab" style="left:29px;top:464px;width:1px;height:1px;background:#808080"></div>
<div class="ab" style="left:29px;top:466px;width:1px;height:1px;background:#808080"></div>
<div class="ab" style="left:29px;top:468px;width:1px;height:1px;background:#808080"></div>
<div class="ab" style="left:29px;top:470px;width:1px;height:1px;background:#808080"></div>
<div class="ab" style="left:29px;top:472px;width:1px;height:1px;background:#808080"></div>
<div class="ab" style="left:29px;top:474px;width:1px;height:1px;background:#808080"></div>
<div class="ab" style="left:29px;top:476px;width:1px;height:1px;background:#808080"></div>
<div class="ab" style="left:29px;top:478px;width:1px;height:1px;background:#808080"></div>
<div class="ab" style="left:29px;top:480px;width:1px;height:1px;background:#808080"></div>
<div class="ab" style="left:29px;top:482px;width:1px;height:1px;background:#808080"></div>
<div class="ab" style="left:29px;top:484px;width:1px;height:1px;background:#808080"></div>
<div class="ab" style="left:29px;top:486px;width:1px;height:1px;background:#808080"></div>
<div class="ab" style="left:29px;top:488px;width:1px;height:1px;background:#808080"></div>
<div class="ab" style="left:29px;top:490px;width:1px;height:1px;background:#808080"></div>
<div class="ab" style="left:29px;top:492px;width:1px;height:1px;background:#808080"></div>
<div class="ab" style="left:29px;top:494px;width:1px;height:1px;background:#808080"></div>
<div class="ab" style="left:31px;top:462px;width:1px;height:1px;background:#808080"></div>
<div class="ab" style="left:33px;top:462px;width:1px;height:1px;background:#808080"></div>
<div class="ab" style="left:35px;top:462px;width:1px;height:1px;background:#808080"></div>
<div class="ab" style="left:37px;top:462px;width:1px;height:1px;background:#808080"></div>
<div class="ab" style="left:39px;top:462px;width:1px;height:1px;background:#808080"></div>
<div class="ab" style="left:31px;top:478px;width:1px;height:1px;background:#808080"></div>
<div class="ab" style="left:33px;top:478px;width:1px;height:1px;background:#808080"></div>
<div class="ab" style="left:35px;top:478px;width:1px;height:1px;background:#808080"></div>
<div class="ab" style="left:37px;top:478px;width:1px;height:1px;background:#808080"></div>
<div class="ab" style="left:39px;top:478px;width:1px;height:1px;background:#808080"></div>
<div class="ab" style="left:31px;top:494px;width:1px;height:1px;background:#808080"></div>
<div class="ab" style="left:33px;top:494px;width:1px;height:1px;background:#808080"></div>
<div class="ab" style="left:35px;top:494px;width:1px;height:1px;background:#808080"></div>
<div class="ab" style="left:37px;top:494px;width:1px;height:1px;background:#808080"></div>
<div class="ab" style="left:39px;top:494px;width:1px;height:1px;background:#808080"></div>
<div class="ab" style="left:48px;top:118px;width:1px;height:1px;background:#808080"></div>
<div class="ab" style="left:48px;top:120px;width:1px;height:1px;background:#808080"></div>
<div class="ab" style="left:48px;top:122px;width:1px;height:1px;background:#808080"></div>
<div class="ab" style="left:48px;top:124px;width:1px;height:1px;background:#808080"></div>
<div class="ab" style="left:48px;top:126px;width:1px;height:1px;background:#808080"></div>
<div class="ab" style="left:50px;top:126px;width:1px;height:1px;background:#808080"></div>
<div class="ab" style="left:52px;top:126px;width:1px;height:1px;background:#808080"></div>
<div class="ab" style="left:54px;top:126px;width:1px;height:1px;background:#808080"></div>
<div class="ab" style="left:56px;top:126px;width:1px;height:1px;background:#808080"></div>
<div class="ab" style="left:58px;top:126px;width:1px;height:1px;background:#808080"></div>
<div class="ab" style="left:48px;top:166px;width:1px;height:1px;background:#808080"></div>
<div class="ab" style="left:48px;top:168px;width:1px;height:1px;background:#808080"></div>
<div class="ab" style="left:48px;top:170px;width:1px;height:1px;background:#808080"></div>
<div class="ab" style="left:48px;top:172px;width:1px;height:1px;background:#808080"></div>
<div class="ab" style="left:48px;top:174px;width:1px;height:1px;background:#808080"></div>
<div class="ab" style="left:50px;top:174px;width:1px;height:1px;background:#808080"></div>
<div class="ab" style="left:52px;top:174px;width:1px;height:1px;background:#808080"></div>
<div class="ab" style="left:54px;top:174px;width:1px;height:1px;background:#808080"></div>
<div class="ab" style="left:56px;top:174px;width:1px;height:1px;background:#808080"></div>
<div class="ab" style="left:58px;top:174px;width:1px;height:1px;background:#808080"></div>
<div class="ab" style="left:48px;top:246px;width:1px;height:1px;background:#808080"></div>
<div class="ab" style="left:48px;top:248px;width:1px;height:1px;background:#808080"></div>
<div class="ab" style="left:48px;top:250px;width:1px;height:1px;background:#808080"></div>
<div class="ab" style="left:48px;top:252px;width:1px;height:1px;background:#808080"></div>
<div class="ab" style="left:48px;top:254px;width:1px;height:1px;background:#808080"></div>
<div class="ab" style="left:48px;top:256px;width:1px;height:1px;background:#808080"></div>
<div class="ab" style="left:48px;top:258px;width:1px;height:1px;background:#808080"></div>
<div class="ab" style="left:48px;top:260px;width:1px;height:1px;background:#808080"></div>
<div class="ab" style="left:48px;top:262px;width:1px;height:1px;background:#808080"></div>
<div class="ab" style="left:48px;top:264px;width:1px;height:1px;background:#808080"></div>
<div class="ab" style="left:48px;top:266px;width:1px;height:1px;background:#808080"></div>
<div class="ab" style="left:48px;top:268px;width:1px;height:1px;background:#808080"></div>
<div class="ab" style="left:48px;top:270px;width:1px;height:1px;background:#808080"></div>
<div class="ab" style="left:48px;top:272px;width:1px;height:1px;background:#808080"></div>
<div class="ab" style="left:48px;top:274px;width:1px;height:1px;background:#808080"></div>
<div class="ab" style="left:48px;top:276px;width:1px;height:1px;background:#808080"></div>
<div class="ab" style="left:48px;top:278px;width:1px;height:1px;background:#808080"></div>
<div class="ab" style="left:48px;top:280px;width:1px;height:1px;background:#808080"></div>
<div class="ab" style="left:48px;top:282px;width:1px;height:1px;background:#808080"></div>
<div class="ab" style="left:48px;top:284px;width:1px;height:1px;background:#808080"></div>
<div class="ab" style="left:48px;top:286px;width:1px;height:1px;background:#808080"></div>
<div class="ab" style="left:48px;top:288px;width:1px;height:1px;background:#808080"></div>
<div class="ab" style="left:48px;top:290px;width:1px;height:1px;background:#808080"></div>
<div class="ab" style="left:48px;top:292px;width:1px;height:1px;background:#808080"></div>
<div class="ab" style="left:48px;top:294px;width:1px;height:1px;background:#808080"></div>
<div class="ab" style="left:48px;top:296px;width:1px;height:1px;background:#808080"></div>
<div class="ab" style="left:48px;top:298px;width:1px;height:1px;background:#808080"></div>
<div class="ab" style="left:48px;top:300px;width:1px;height:1px;background:#808080"></div>
<div class="ab" style="left:48px;top:302px;width:1px;height:1px;background:#808080"></div>
<div class="ab" style="left:48px;top:304px;width:1px;height:1px;background:#808080"></div>
<div class="ab" style="left:48px;top:306px;width:1px;height:1px;background:#808080"></div>
<div class="ab" style="left:48px;top:308px;width:1px;height:1px;background:#808080"></div>
<div class="ab" style="left:48px;top:310px;width:1px;height:1px;background:#808080"></div>
<div class="ab" style="left:48px;top:312px;width:1px;height:1px;background:#808080"></div>
<div class="ab" style="left:48px;top:314px;width:1px;height:1px;background:#808080"></div>
<div class="ab" style="left:48px;top:316px;width:1px;height:1px;background:#808080"></div>
<div class="ab" style="left:48px;top:318px;width:1px;height:1px;background:#808080"></div>
<div class="ab" style="left:48px;top:320px;width:1px;height:1px;background:#808080"></div>
<div class="ab" style="left:48px;top:322px;width:1px;height:1px;background:#808080"></div>
<div class="ab" style="left:48px;top:324px;width:1px;height:1px;background:#808080"></div>
<div class="ab" style="left:48px;top:326px;width:1px;height:1px;background:#808080"></div>
<div class="ab" style="left:48px;top:328px;width:1px;height:1px;background:#808080"></div>
<div class="ab" style="left:48px;top:330px;width:1px;height:1px;background:#808080"></div>
<div class="ab" style="left:48px;top:332px;width:1px;height:1px;background:#808080"></div>
<div class="ab" style="left:48px;top:334px;width:1px;height:1px;background:#808080"></div>
<div class="ab" style="left:48px;top:336px;width:1px;height:1px;background:#808080"></div>
<div class="ab" style="left:48px;top:338px;width:1px;height:1px;background:#808080"></div>
<div class="ab" style="left:48px;top:340px;width:1px;height:1px;background:#808080"></div>
<div class="ab" style="left:48px;top:342px;width:1px;height:1px;background:#808080"></div>
<div class="ab" style="left:48px;top:344px;width:1px;height:1px;background:#808080"></div>
<div class="ab" style="left:48px;top:346px;width:1px;height:1px;background:#808080"></div>
<div class="ab" style="left:48px;top:348px;width:1px;height:1px;background:#808080"></div>
<div class="ab" style="left:48px;top:350px;width:1px;height:1px;background:#808080"></div>
<div class="ab" style="left:48px;top:352px;width:1px;height:1px;background:#808080"></div>
<div class="ab" style="left:48px;top:354px;width:1px;height:1px;background:#808080"></div>
<div class="ab" style="left:48px;top:356px;width:1px;height:1px;background:#808080"></div>
<div class="ab" style="left:48px;top:358px;width:1px;height:1px;background:#808080"></div>
<div class="ab" style="left:48px;top:360px;width:1px;height:1px;background:#808080"></div>
<div class="ab" style="left:48px;top:362px;width:1px;height:1px;background:#808080"></div>
<div class="ab" style="left:48px;top:364px;width:1px;height:1px;background:#808080"></div>
<div class="ab" style="left:48px;top:366px;width:1px;height:1px;background:#808080"></div>
<div class="ab" style="left:50px;top:254px;width:1px;height:1px;background:#808080"></div>
<div class="ab" style="left:52px;top:254px;width:1px;height:1px;background:#808080"></div>
<div class="ab" style="left:54px;top:254px;width:1px;height:1px;background:#808080"></div>
<div class="ab" style="left:56px;top:254px;width:1px;height:1px;background:#808080"></div>
<div class="ab" style="left:58px;top:254px;width:1px;height:1px;background:#808080"></div>
<div class="ab" style="left:50px;top:270px;width:1px;height:1px;background:#808080"></div>
<div class="ab" style="left:52px;top:270px;width:1px;height:1px;background:#808080"></div>
<div class="ab" style="left:54px;top:270px;width:1px;height:1px;background:#808080"></div>
<div class="ab" style="left:56px;top:270px;width:1px;height:1px;background:#808080"></div>
<div class="ab" style="left:58px;top:270px;width:1px;height:1px;background:#808080"></div>
<div class="ab" style="left:50px;top:286px;width:1px;height:1px;background:#808080"></div>
<div class="ab" style="left:52px;top:286px;width:1px;height:1px;background:#808080"></div>
<div class="ab" style="left:54px;top:286px;width:1px;height:1px;background:#808080"></div>
<div class="ab" style="left:56px;top:286px;width:1px;height:1px;background:#808080"></div>
<div class="ab" style="left:58px;top:286px;width:1px;height:1px;background:#808080"></div>
<div class="ab" style="left:50px;top:302px;width:1px;height:1px;background:#808080"></div>
<div class="ab" style="left:52px;top:302px;width:1px;height:1px;background:#808080"></div>
<div class="ab" style="left:54px;top:302px;width:1px;height:1px;background:#808080"></div>
<div class="ab" style="left:56px;top:302px;width:1px;height:1px;background:#808080"></div>
<div class="ab" style="left:58px;top:302px;width:1px;height:1px;background:#808080"></div>
<div class="ab" style="left:50px;top:318px;width:1px;height:1px;background:#808080"></div>
<div class="ab" style="left:52px;top:318px;width:1px;height:1px;background:#808080"></div>
<div class="ab" style="left:54px;top:318px;width:1px;height:1px;background:#808080"></div>
<div class="ab" style="left:56px;top:318px;width:1px;height:1px;background:#808080"></div>
<div class="ab" style="left:58px;top:318px;width:1px;height:1px;background:#808080"></div>
<div class="ab" style="left:50px;top:334px;width:1px;height:1px;background:#808080"></div>
<div class="ab" style="left:52px;top:334px;width:1px;height:1px;background:#808080"></div>
<div class="ab" style="left:54px;top:334px;width:1px;height:1px;background:#808080"></div>
<div class="ab" style="left:56px;top:334px;width:1px;height:1px;background:#808080"></div>
<div class="ab" style="left:58px;top:334px;width:1px;height:1px;background:#808080"></div>
<div class="ab" style="left:50px;top:350px;width:1px;height:1px;background:#808080"></div>
<div class="ab" style="left:52px;top:350px;width:1px;height:1px;background:#808080"></div>
<div class="ab" style="left:54px;top:350px;width:1px;height:1px;background:#808080"></div>
<div class="ab" style="left:56px;top:350px;width:1px;height:1px;background:#808080"></div>
<div class="ab" style="left:58px;top:350px;width:1px;height:1px;background:#808080"></div>
<div class="ab" style="left:50px;top:366px;width:1px;height:1px;background:#808080"></div>
<div class="ab" style="left:52px;top:366px;width:1px;height:1px;background:#808080"></div>
<div class="ab" style="left:54px;top:366px;width:1px;height:1px;background:#808080"></div>
<div class="ab" style="left:56px;top:366px;width:1px;height:1px;background:#808080"></div>
<div class="ab" style="left:58px;top:366px;width:1px;height:1px;background:#808080"></div>
<div class="ab" style="left:6px;top:74px;width:9px;height:9px;border:1px solid #808080;background:#fff"></div>
<div class="ab" style="left:8px;top:78px;width:5px;height:1px;background:#000"></div>
<svg class="ab" style="left:22px;top:70px" width="16" height="16"><path d="M0.5 9 L6.3 1 L12.5 9" stroke="#A83A22" stroke-width="2" fill="none" stroke-linejoin="round"/><path d="M11.3 2V7.5" stroke="#802818" stroke-width="1.3"/><path d="M1.5 9 L6.3 3 L12 9 V14.5 H1.5Z" fill="#DCE6FA"/><rect x="4.5" y="9.5" width="4.5" height="5" fill="#C89028" stroke="#7A5A10" stroke-width="0.8"/><path d="M1.5 14.5H12.5" stroke="#6A8AA0"/></svg>
<div class="t" style="left:42px;top:71px">Principal</div>
<svg class="ab" style="left:40px;top:86px" width="16" height="16"><rect x="0.5" y="0.5" width="7" height="11" rx="1.5" fill="#F2E070" stroke="#C8B040"/><rect x="1.5" y="1.5" width="5" height="2" fill="#D8B838"/><rect x="3.5" y="5.5" width="12" height="10" fill="#E4F4EC" stroke="#708890"/><path d="M5.5 12.5 L9.5 7.5 L13.5 12" stroke="#2A8A3A" stroke-width="1.8" fill="none"/></svg>
<div class="t" style="left:61px;top:87px">Projeto</div>
<div class="ab" style="left:25px;top:106px;width:9px;height:9px;border:1px solid #808080;background:#fff"></div>
<div class="ab" style="left:27px;top:110px;width:5px;height:1px;background:#000"></div>
<svg class="ab" style="left:42px;top:102px" width="16" height="16"><defs><linearGradient id="rq" x1="0" y1="0" x2="1" y2="1"><stop offset="0" stop-color="#F8FAFF"/><stop offset="1" stop-color="#B8CCF0"/></linearGradient></defs><path d="M0.5 0.5 H9 L12.5 4 V15.5 H0.5 Z" fill="url(#rq)" stroke="#8090B0"/><path d="M9 0.5 L12.5 4 L9 4Z" fill="#9098C8"/><path d="M4.5 12.5V5.5H7.5Q9 5.5 9 7Q9 8.5 7.5 8.5H4.5M6.5 8.5L9 12.5" stroke="#000" stroke-width="1.1" fill="none"/></svg>
<div class="t" style="left:61px;top:103px">Requisitos</div>
<svg class="ab" style="left:61px;top:118px" width="16" height="16"><defs><linearGradient id="rq" x1="0" y1="0" x2="1" y2="1"><stop offset="0" stop-color="#F8FAFF"/><stop offset="1" stop-color="#B8CCF0"/></linearGradient></defs><path d="M0.5 0.5 H9 L12.5 4 V15.5 H0.5 Z" fill="url(#rq)" stroke="#8090B0"/><path d="M9 0.5 L12.5 4 L9 4Z" fill="#9098C8"/><path d="M4.5 12.5V5.5H7.5Q9 5.5 9 7Q9 8.5 7.5 8.5H4.5M6.5 8.5L9 12.5" stroke="#000" stroke-width="1.1" fill="none"/></svg>
<div class="t" style="left:80px;top:119px">Dependência - Requisitos</div>
<svg class="ab" style="left:40px;top:134px" width="16" height="16"><defs><linearGradient id="ucg" x1="0" y1="0" x2="0" y2="1"><stop offset="0" stop-color="#C8E8FF"/><stop offset="1" stop-color="#7CC4F4"/></linearGradient></defs><rect x="0.5" y="0.5" width="15" height="11" rx="1.5" fill="url(#ucg)" stroke="#8898B0"/><rect x="2" y="12" width="12" height="1" fill="#9098B0"/><rect x="2" y="13" width="12" height="2" fill="#606880"/></svg>
<div class="t" style="left:61px;top:135px">Casos de Uso</div>
<div class="ab" style="left:25px;top:154px;width:9px;height:9px;border:1px solid #808080;background:#fff"></div>
<div class="ab" style="left:27px;top:158px;width:5px;height:1px;background:#000"></div>
<svg class="ab" style="left:40px;top:151px" width="16" height="16"><rect x="7.5" y="0.5" width="8.5" height="8.5" fill="#22A022" stroke="#0A4A0A"/><path d="M0 10 L5 3.5 L8 10 Z" fill="#1848B8"/><circle cx="9.2" cy="11" r="4" fill="#E81818"/></svg>
<div class="t" style="left:61px;top:151px">Implementações</div>
<svg class="ab" style="left:59px;top:167px" width="16" height="16"><rect x="7.5" y="0.5" width="8.5" height="8.5" fill="#22A022" stroke="#0A4A0A"/><path d="M0 10 L5 3.5 L8 10 Z" fill="#1848B8"/><circle cx="9.2" cy="11" r="4" fill="#E81818"/></svg>
<div class="t" style="left:80px;top:167px">Dependência - Implementações</div>
<svg class="ab" style="left:42px;top:184px" width="16" height="16"><path d="M2.5 8 L6 12.5 L12 1.5" stroke="#22B022" stroke-width="3.2" fill="none" stroke-linecap="round" stroke-linejoin="round"/><path d="M11 2.5 L12.5 0.5" stroke="#80E080" stroke-width="1.5"/></svg>
<div class="t" style="left:61px;top:183px">Casos de Teste</div>
<svg class="ab" style="left:40px;top:198px" width="16" height="16"><path d="M4 3.5 L8 7.5" stroke="#283040" stroke-width="2.6"/><path d="M4 3.5 L8 7.5" stroke="#B8C4D8" stroke-width="1.2"/><path d="M7.5 7 L13.5 13" stroke="#201408" stroke-width="3.6" stroke-linecap="round"/><path d="M7.5 7 L13.5 13" stroke="#F0B888" stroke-width="1.8" stroke-linecap="round"/><path d="M1.5 12.5 L8 6.5" stroke="#201408" stroke-width="3.6" stroke-linecap="round"/><path d="M1.5 12.5 L8 6.5" stroke="#F4C8A0" stroke-width="1.8" stroke-linecap="round"/><ellipse cx="3.3" cy="2.8" rx="2.3" ry="2.3" fill="#C8D0E0" stroke="#202838" stroke-width="1.1"/><path d="M8.5 5.5 L12 1.5 L14.5 2.5 L14 5 L10.5 7.5Z" fill="#A8BCC8" stroke="#202838" stroke-width="1.1"/></svg>
<div class="t" style="left:61px;top:199px">Erros</div>
<svg class="ab" style="left:41px;top:214px" width="16" height="16"><path d="M1.5 2.5 L12.5 2 L13.5 15 L3 15.5 Z" fill="#F4C060" stroke="#5A3A10"/><path d="M1.5 2.5 L4.5 4.5 V15.5" stroke="#8A5A10" fill="#D89030"/><rect x="6" y="5" width="5" height="8" fill="#FCE8B0"/><path d="M3 1.5 L6 0.5 L11 1" stroke="#5A3A10" fill="none"/></svg>
<div class="t" style="left:61px;top:215px">Liberações</div>
<div class="ab" style="left:25px;top:234px;width:9px;height:9px;border:1px solid #808080;background:#fff"></div>
<div class="ab" style="left:27px;top:238px;width:5px;height:1px;background:#000"></div>
<svg class="ab" style="left:41px;top:232px" width="16" height="16"><defs><linearGradient id="mx" x1="0" y1="0" x2="1" y2="1"><stop offset="0.4" stop-color="#FFFFFF"/><stop offset="1" stop-color="#9CC8F4"/></linearGradient></defs><rect x="1" y="1" width="13" height="11.5" fill="url(#mx)" stroke="#1A4EA0" stroke-width="1.3"/><path d="M0.8 2.2 Q0.8 0.5 2.5 0.5 H12.5 Q14.2 0.5 14.2 2.2" stroke="#1A4EA0" stroke-width="1.6" fill="none"/><rect x="3.5" y="3.5" width="3.5" height="2.8" fill="#F4C8A8" stroke="#5A1A08"/><rect x="3.5" y="8.2" width="3.5" height="2.8" fill="#F4C8A8" stroke="#5A1A08"/><path d="M6.5 3.5 L8 2 M6.5 8.2 L8 6.7" stroke="#8A4A3A" stroke-width="0.8"/></svg>
<div class="t" style="left:61px;top:231px">Matriz de Rastreio</div>
<svg class="ab" style="left:60px;top:248px" width="16" height="16"><defs><linearGradient id="mx" x1="0" y1="0" x2="1" y2="1"><stop offset="0.4" stop-color="#FFFFFF"/><stop offset="1" stop-color="#9CC8F4"/></linearGradient></defs><rect x="1" y="1" width="13" height="11.5" fill="url(#mx)" stroke="#1A4EA0" stroke-width="1.3"/><path d="M0.8 2.2 Q0.8 0.5 2.5 0.5 H12.5 Q14.2 0.5 14.2 2.2" stroke="#1A4EA0" stroke-width="1.6" fill="none"/><rect x="3.5" y="3.5" width="3.5" height="2.8" fill="#F4C8A8" stroke="#5A1A08"/><rect x="3.5" y="8.2" width="3.5" height="2.8" fill="#F4C8A8" stroke="#5A1A08"/><path d="M6.5 3.5 L8 2 M6.5 8.2 L8 6.7" stroke="#8A4A3A" stroke-width="0.8"/></svg>
<div class="ab" style="left:78px;top:246px;width:132px;height:16px;background:#0A246A"></div>
<div class="ab" style="left:78px;top:246px;width:132px;height:16px;background-image:repeating-linear-gradient(to right,#000 0 1px,transparent 1px 2px),repeating-linear-gradient(to right,#000 0 1px,transparent 1px 2px),repeating-linear-gradient(to bottom,#000 0 1px,transparent 1px 2px),repeating-linear-gradient(to bottom,#000 0 1px,transparent 1px 2px);background-size:100% 1px,100% 1px,1px 100%,1px 100%;background-position:0 0,0 100%,0 0,100% 0;background-repeat:no-repeat"></div>
<div class="t" style="left:80px;top:247px;color:#fff;word-spacing:-0.7px">Casos de Uso X Requisitos</div>
<svg class="ab" style="left:60px;top:264px" width="16" height="16"><defs><linearGradient id="mx" x1="0" y1="0" x2="1" y2="1"><stop offset="0.4" stop-color="#FFFFFF"/><stop offset="1" stop-color="#9CC8F4"/></linearGradient></defs><rect x="1" y="1" width="13" height="11.5" fill="url(#mx)" stroke="#1A4EA0" stroke-width="1.3"/><path d="M0.8 2.2 Q0.8 0.5 2.5 0.5 H12.5 Q14.2 0.5 14.2 2.2" stroke="#1A4EA0" stroke-width="1.6" fill="none"/><rect x="3.5" y="3.5" width="3.5" height="2.8" fill="#F4C8A8" stroke="#5A1A08"/><rect x="3.5" y="8.2" width="3.5" height="2.8" fill="#F4C8A8" stroke="#5A1A08"/><path d="M6.5 3.5 L8 2 M6.5 8.2 L8 6.7" stroke="#8A4A3A" stroke-width="0.8"/></svg>
<div class="t" style="left:80px;top:263px;word-spacing:-0.7px">Casos de Uso X Implementações</div>
<svg class="ab" style="left:60px;top:280px" width="16" height="16"><defs><linearGradient id="mx" x1="0" y1="0" x2="1" y2="1"><stop offset="0.4" stop-color="#FFFFFF"/><stop offset="1" stop-color="#9CC8F4"/></linearGradient></defs><rect x="1" y="1" width="13" height="11.5" fill="url(#mx)" stroke="#1A4EA0" stroke-width="1.3"/><path d="M0.8 2.2 Q0.8 0.5 2.5 0.5 H12.5 Q14.2 0.5 14.2 2.2" stroke="#1A4EA0" stroke-width="1.6" fill="none"/><rect x="3.5" y="3.5" width="3.5" height="2.8" fill="#F4C8A8" stroke="#5A1A08"/><rect x="3.5" y="8.2" width="3.5" height="2.8" fill="#F4C8A8" stroke="#5A1A08"/><path d="M6.5 3.5 L8 2 M6.5 8.2 L8 6.7" stroke="#8A4A3A" stroke-width="0.8"/></svg>
<div class="t" style="left:80px;top:279px;word-spacing:-0.7px">Casos de Uso X Casos de Teste</div>
<svg class="ab" style="left:60px;top:296px" width="16" height="16"><defs><linearGradient id="mx" x1="0" y1="0" x2="1" y2="1"><stop offset="0.4" stop-color="#FFFFFF"/><stop offset="1" stop-color="#9CC8F4"/></linearGradient></defs><rect x="1" y="1" width="13" height="11.5" fill="url(#mx)" stroke="#1A4EA0" stroke-width="1.3"/><path d="M0.8 2.2 Q0.8 0.5 2.5 0.5 H12.5 Q14.2 0.5 14.2 2.2" stroke="#1A4EA0" stroke-width="1.6" fill="none"/><rect x="3.5" y="3.5" width="3.5" height="2.8" fill="#F4C8A8" stroke="#5A1A08"/><rect x="3.5" y="8.2" width="3.5" height="2.8" fill="#F4C8A8" stroke="#5A1A08"/><path d="M6.5 3.5 L8 2 M6.5 8.2 L8 6.7" stroke="#8A4A3A" stroke-width="0.8"/></svg>
<div class="t" style="left:80px;top:295px;word-spacing:-0.7px">Casos de Teste X Erros</div>
<svg class="ab" style="left:60px;top:312px" width="16" height="16"><defs><linearGradient id="mx" x1="0" y1="0" x2="1" y2="1"><stop offset="0.4" stop-color="#FFFFFF"/><stop offset="1" stop-color="#9CC8F4"/></linearGradient></defs><rect x="1" y="1" width="13" height="11.5" fill="url(#mx)" stroke="#1A4EA0" stroke-width="1.3"/><path d="M0.8 2.2 Q0.8 0.5 2.5 0.5 H12.5 Q14.2 0.5 14.2 2.2" stroke="#1A4EA0" stroke-width="1.6" fill="none"/><rect x="3.5" y="3.5" width="3.5" height="2.8" fill="#F4C8A8" stroke="#5A1A08"/><rect x="3.5" y="8.2" width="3.5" height="2.8" fill="#F4C8A8" stroke="#5A1A08"/><path d="M6.5 3.5 L8 2 M6.5 8.2 L8 6.7" stroke="#8A4A3A" stroke-width="0.8"/></svg>
<div class="t" style="left:80px;top:311px;word-spacing:-0.7px">Implementações X Erros</div>
<svg class="ab" style="left:60px;top:328px" width="16" height="16"><defs><linearGradient id="mx" x1="0" y1="0" x2="1" y2="1"><stop offset="0.4" stop-color="#FFFFFF"/><stop offset="1" stop-color="#9CC8F4"/></linearGradient></defs><rect x="1" y="1" width="13" height="11.5" fill="url(#mx)" stroke="#1A4EA0" stroke-width="1.3"/><path d="M0.8 2.2 Q0.8 0.5 2.5 0.5 H12.5 Q14.2 0.5 14.2 2.2" stroke="#1A4EA0" stroke-width="1.6" fill="none"/><rect x="3.5" y="3.5" width="3.5" height="2.8" fill="#F4C8A8" stroke="#5A1A08"/><rect x="3.5" y="8.2" width="3.5" height="2.8" fill="#F4C8A8" stroke="#5A1A08"/><path d="M6.5 3.5 L8 2 M6.5 8.2 L8 6.7" stroke="#8A4A3A" stroke-width="0.8"/></svg>
<div class="t" style="left:80px;top:327px;word-spacing:-0.7px">Liberações X Casos de Uso</div>
<svg class="ab" style="left:60px;top:344px" width="16" height="16"><defs><linearGradient id="mx" x1="0" y1="0" x2="1" y2="1"><stop offset="0.4" stop-color="#FFFFFF"/><stop offset="1" stop-color="#9CC8F4"/></linearGradient></defs><rect x="1" y="1" width="13" height="11.5" fill="url(#mx)" stroke="#1A4EA0" stroke-width="1.3"/><path d="M0.8 2.2 Q0.8 0.5 2.5 0.5 H12.5 Q14.2 0.5 14.2 2.2" stroke="#1A4EA0" stroke-width="1.6" fill="none"/><rect x="3.5" y="3.5" width="3.5" height="2.8" fill="#F4C8A8" stroke="#5A1A08"/><rect x="3.5" y="8.2" width="3.5" height="2.8" fill="#F4C8A8" stroke="#5A1A08"/><path d="M6.5 3.5 L8 2 M6.5 8.2 L8 6.7" stroke="#8A4A3A" stroke-width="0.8"/></svg>
<div class="t" style="left:80px;top:343px;word-spacing:-0.7px">Liberações X Casos de Teste</div>
<svg class="ab" style="left:60px;top:360px" width="16" height="16"><defs><linearGradient id="mx" x1="0" y1="0" x2="1" y2="1"><stop offset="0.4" stop-color="#FFFFFF"/><stop offset="1" stop-color="#9CC8F4"/></linearGradient></defs><rect x="1" y="1" width="13" height="11.5" fill="url(#mx)" stroke="#1A4EA0" stroke-width="1.3"/><path d="M0.8 2.2 Q0.8 0.5 2.5 0.5 H12.5 Q14.2 0.5 14.2 2.2" stroke="#1A4EA0" stroke-width="1.6" fill="none"/><rect x="3.5" y="3.5" width="3.5" height="2.8" fill="#F4C8A8" stroke="#5A1A08"/><rect x="3.5" y="8.2" width="3.5" height="2.8" fill="#F4C8A8" stroke="#5A1A08"/><path d="M6.5 3.5 L8 2 M6.5 8.2 L8 6.7" stroke="#8A4A3A" stroke-width="0.8"/></svg>
<div class="t" style="left:80px;top:359px;word-spacing:-0.7px">Erros X Liberações</div>
<svg class="ab" style="left:40px;top:375px" width="16" height="16"><rect x="2" y="3" width="2" height="11" fill="#4A50B0"/><rect x="4.5" y="7" width="2" height="7" fill="#9A2A88"/><rect x="7" y="5" width="2" height="9" fill="#5A48A8"/><rect x="9.5" y="1" width="2.5" height="13" fill="#C02888"/><path d="M0.5 0V14.5H15" stroke="#30305A" fill="none"/></svg>
<div class="t" style="left:61px;top:375px">Métricas</div>
<div class="ab" style="left:6px;top:394px;width:9px;height:9px;border:1px solid #808080;background:#fff"></div>
<div class="ab" style="left:8px;top:398px;width:5px;height:1px;background:#000"></div>
<svg class="ab" style="left:21px;top:390px" width="16" height="16"><circle cx="4.5" cy="3.5" r="3" fill="#D89828"/><path d="M2.5 2 Q4.5 0 7 2" stroke="#7A5A18" fill="none"/><path d="M0 13 Q0 7 5 7 Q8 7 8 12Z" fill="#2A60C0"/><rect x="5.5" y="5.5" width="10" height="10" rx="1" fill="#EEF4FF" stroke="#2A50A0"/><path d="M8.5 14.5 Q9.8 11 10.5 8.5 Q11 7 13 7.3" stroke="#900018" stroke-width="1.3" fill="none"/><path d="M9 10.5H12.5" stroke="#900018" stroke-width="1"/></svg>
<div class="t" style="left:42px;top:391px">Simulações</div>
<svg class="ab" style="left:40px;top:407px" width="16" height="16"><rect x="0.5" y="0.5" width="15" height="13" fill="#E8F4FF" stroke="#1A50A0"/><path d="M0.5 4.5H15.5M0.5 9H15.5M5.5 0.5V13.5M10.5 0.5V13.5" stroke="#1A50A0"/><circle cx="8" cy="7.5" r="3.2" fill="#F8D0B8" stroke="#B04A28"/></svg>
<div class="t" style="left:61px;top:407px">Priorização de Requisitos</div>
<svg class="ab" style="left:40px;top:423px" width="16" height="16"><rect x="0.5" y="0.5" width="15" height="13" fill="#E8F4FF" stroke="#1A50A0"/><path d="M0.5 4.5H15.5M0.5 9H15.5M5.5 0.5V13.5M10.5 0.5V13.5" stroke="#1A50A0"/><circle cx="8" cy="7.5" r="3.2" fill="#F8D0B8" stroke="#B04A28"/></svg>
<div class="t" style="left:61px;top:423px">Pontos de Caso de Uso</div>
<div class="ab" style="left:6px;top:442px;width:9px;height:9px;border:1px solid #808080;background:#fff"></div>
<div class="ab" style="left:8px;top:446px;width:5px;height:1px;background:#000"></div>
<svg class="ab" style="left:22px;top:438px" width="16" height="16"><path d="M3.5 0.5H9L11.5 3V7H3.5Z" fill="#E8EEF8" stroke="#A0A8B8"/><path d="M0.5 9 Q0.5 6 3 6H12Q14.5 6 14.5 9V12 Q14.5 14.5 12 14.5H3Q0.5 14.5 0.5 12Z" fill="#D8D8D0" stroke="#888880"/><path d="M1 10.5H14" stroke="#A8A8A0" stroke-width="2"/><path d="M3 13H12" stroke="#F0F0E8"/></svg>
<div class="t" style="left:42px;top:439px">Relatórios</div>
<svg class="ab" style="left:41px;top:454px" width="16" height="16"><rect x="0" y="0" width="14" height="14" fill="#F8FAFC"/><path d="M0.5 13.5V0.5H13.5" stroke="#C0C8D4" fill="none"/><path d="M13.5 0.5V13.5H0.5" stroke="#283040" stroke-width="1.2" fill="none"/><rect x="2" y="2" width="10" height="2" fill="#7888A8"/><rect x="2" y="5" width="4" height="7.5" fill="#A8B0C0"/><path d="M7 5.5H12M7 7.5H12M7 9.5H12M7 11.5H12" stroke="#38508A"/></svg>
<div class="t" style="left:61px;top:455px">Plano de Projeto</div>
<svg class="ab" style="left:41px;top:470px" width="16" height="16"><rect x="0" y="0" width="14" height="14" fill="#F8FAFC"/><path d="M0.5 13.5V0.5H13.5" stroke="#C0C8D4" fill="none"/><path d="M13.5 0.5V13.5H0.5" stroke="#283040" stroke-width="1.2" fill="none"/><rect x="2" y="2" width="10" height="2" fill="#7888A8"/><rect x="2" y="5" width="4" height="7.5" fill="#A8B0C0"/><path d="M7 5.5H12M7 7.5H12M7 9.5H12M7 11.5H12" stroke="#38508A"/></svg>
<div class="t" style="left:61px;top:471px">Documento de Requisitos</div>
<svg class="ab" style="left:41px;top:486px" width="16" height="16"><rect x="0" y="0" width="14" height="14" fill="#F8FAFC"/><path d="M0.5 13.5V0.5H13.5" stroke="#C0C8D4" fill="none"/><path d="M13.5 0.5V13.5H0.5" stroke="#283040" stroke-width="1.2" fill="none"/><rect x="2" y="2" width="10" height="2" fill="#7888A8"/><rect x="2" y="5" width="4" height="7.5" fill="#A8B0C0"/><path d="M7 5.5H12M7 7.5H12M7 9.5H12M7 11.5H12" stroke="#38508A"/></svg>
<div class="t" style="left:61px;top:487px">Descrição dos Casos de Uso</div>
<div class="ab" style="left:258px;top:68px;width:766px;height:26px;background:#848284"></div>
<div class="t" style="left:262px;top:72px;color:#fff;font-weight:bold;font-size:14px;letter-spacing:0.4px;line-height:16px">Rastreabilidade Casos de Uso -&gt; Requisitos</div>
<div class="ab" style="left:258px;top:94px;width:765px;height:1px;background:#fff"></div>
<div class="ab" style="left:258px;top:94px;width:1px;height:29px;background:#fff"></div>
<div class="ab" style="left:258px;top:122px;width:765px;height:1px;background:#808080"></div>
<div class="ab" style="left:1022px;top:94px;width:1px;height:29px;background:#808080"></div>
<svg class="ab" style="left:274px;top:101px" width="14" height="15"><path d="M3.6 5 A4.8 4.8 0 1 0 10.2 4.6" stroke="#000A5A" stroke-width="2.2" fill="none"/><path d="M7.5 1.5 L12.5 1.5 L7.5 6.5Z" fill="#000A5A"/><path d="M2.5 3.5 L4 5" stroke="#000A5A" stroke-width="1.5"/></svg>
<div class="t" style="left:293px;top:103px;font-size:10.3px">Atualizar</div>
<svg class="ab" style="left:348px;top:102px" width="15" height="15"><rect x="0" y="0" width="14" height="14" fill="#F8FAFC"/><path d="M0.5 13.5V0.5H13.5" stroke="#C0C8D4" fill="none"/><path d="M13.5 0.5V13.5H0.5" stroke="#283040" stroke-width="1.2" fill="none"/><rect x="2" y="2" width="10" height="2" fill="#7888A8"/><rect x="2" y="5" width="4" height="7.5" fill="#A8B0C0"/><path d="M7 5.5H12M7 7.5H12M7 9.5H12M7 11.5H12" stroke="#38508A"/></svg>
<div class="t" style="left:368px;top:103px;font-size:10.3px">Relatório</div>
<div class="ab" style="left:258px;top:123px;width:765px;height:1px;background:#fff"></div>
<div class="ab" style="left:258px;top:124px;width:765px;height:1px;background:#707070"></div>
<div class="ab" style="left:258px;top:124px;width:1px;height:547px;background:#808080"></div>
<div class="ab" style="left:259px;top:125px;width:764px;height:1px;background:#404040"></div>
<div class="ab" style="left:259px;top:125px;width:1px;height:545px;background:#404040"></div>
<div class="ab" style="left:258px;top:671px;width:766px;height:1px;background:#fff"></div>
<div class="ab" style="left:259px;top:670px;width:764px;height:1px;background:#D4D0C8"></div>
<div class="ab" style="left:1023px;top:124px;width:1px;height:548px;background:#fff"></div>
<div class="ab" style="left:1022px;top:125px;width:1px;height:546px;background:#D4D0C8"></div>
<div class="ab" style="left:260px;top:126px;width:762px;height:544px;background:#F4F4F0;overflow:hidden">
<div class="ab" style="left:0px;top:0px;width:14px;height:68px;background:#D4D0C8"></div>
<div class="ab" style="left:14px;top:0px;width:100px;height:68px;background:#D4D0C8"></div>
<div class="ab" style="left:0px;top:0px;width:762px;height:1px;background:#fff"></div>
<div class="ab" style="left:0px;top:0px;width:1px;height:362px;background:#fff"></div>
<div class="ab" style="left:13px;top:0px;width:1px;height:362px;background:#404040"></div>
<div class="ab" style="left:14px;top:0px;width:1px;height:362px;background:#fff"></div>
<div class="ab" style="left:113px;top:0px;width:1px;height:67px;background:#808080"></div>
<div class="ab" style="left:113px;top:68px;width:1px;height:294px;background:#101010"></div>
<div class="ab" style="left:114px;top:0px;width:100px;height:68px;background:#D4D0C8"></div>
<div class="ab" style="left:114px;top:0px;width:1px;height:68px;background:#fff"></div>
<div class="ab" style="left:213px;top:0px;width:1px;height:68px;background:#808080"></div>
<div class="t" style="left:118px;top:20px;font-size:10.4px;line-height:13px">RF1-Cadastro de<br>Usuárioss</div>
<div class="ab" style="left:214px;top:0px;width:100px;height:68px;background:#D4D0C8"></div>
<div class="ab" style="left:214px;top:0px;width:1px;height:68px;background:#fff"></div>
<div class="ab" style="left:313px;top:0px;width:1px;height:68px;background:#808080"></div>
<div class="t" style="left:218px;top:20px;font-size:10.4px;line-height:13px">RF2-Níveis<br>hierárquicos</div>
<div class="ab" style="left:314px;top:0px;width:100px;height:68px;background:#D4D0C8"></div>
<div class="ab" style="left:314px;top:0px;width:1px;height:68px;background:#fff"></div>
<div class="ab" style="left:413px;top:0px;width:1px;height:68px;background:#808080"></div>
<div class="t" style="left:318px;top:20px;font-size:10.4px;line-height:13px">RF3-Cadastro de<br>Clientess</div>
<div class="ab" style="left:414px;top:0px;width:100px;height:68px;background:#D4D0C8"></div>
<div class="ab" style="left:414px;top:0px;width:1px;height:68px;background:#fff"></div>
<div class="ab" style="left:513px;top:0px;width:1px;height:68px;background:#808080"></div>
<div class="t" style="left:418px;top:20px;font-size:10.4px;line-height:13px">RF4-Controle de<br>Notas Fiscais</div>
<div class="ab" style="left:514px;top:0px;width:100px;height:68px;background:#D4D0C8"></div>
<div class="ab" style="left:514px;top:0px;width:1px;height:68px;background:#fff"></div>
<div class="ab" style="left:613px;top:0px;width:1px;height:68px;background:#808080"></div>
<div class="t" style="left:518px;top:20px;font-size:10.4px;line-height:13px">RF5-Cadastro de<br>Produtos</div>
<div class="ab" style="left:614px;top:0px;width:100px;height:68px;background:#D4D0C8"></div>
<div class="ab" style="left:614px;top:0px;width:1px;height:68px;background:#fff"></div>
<div class="ab" style="left:713px;top:0px;width:1px;height:68px;background:#808080"></div>
<div class="t" style="left:618px;top:14px;font-size:10.4px;line-height:13px">RF6-Cadastro de<br>Condições de<br>Pagamento</div>
<div class="ab" style="left:714px;top:0px;width:100px;height:68px;background:#D4D0C8"></div>
<div class="ab" style="left:714px;top:0px;width:1px;height:68px;background:#fff"></div>
<div class="ab" style="left:813px;top:0px;width:1px;height:68px;background:#808080"></div>
<div class="t" style="left:718px;top:20px;font-size:10.4px;line-height:13px">RF7-Cálculo de<br>Comissão</div>
<div class="ab" style="left:0px;top:67px;width:762px;height:1px;background:#808080"></div>
<div class="ab" style="left:0px;top:0px;width:762px;height:1px;background:#fff"></div>
<div class="ab" style="left:1px;top:68px;width:12px;height:48px;background:#D4D0C8"></div>
<div class="ab" style="left:15px;top:68px;width:98px;height:48px;background:#D4D0C8"></div>
<div class="ab" style="left:0px;top:68px;width:14px;height:1px;background:#fff"></div>
<div class="ab" style="left:14px;top:68px;width:100px;height:1px;background:#fff"></div>
<div class="ab" style="left:0px;top:116px;width:113px;height:1px;background:#808080"></div>
<div class="ab" style="left:18px;top:69px;height:48px;display:flex;align-items:center"><div style="font-size:10.4px;line-height:13px;white-space:nowrap">UC1-Cadastrar<br>usuários</div></div>
<div class="ab" style="left:114px;top:68px;width:99px;height:48px;background:#FFFFC4"></div>
<div class="ab" style="left:213px;top:68px;width:1px;height:49px;background:#B4B4B4"></div>
<div class="ab" style="left:114px;top:116px;width:100px;height:1px;background:#B4B4B4"></div>
<svg class="ab" style="left:157px;top:85px" width="13" height="13"><rect x="0.5" y="0.5" width="12" height="12" fill="none" stroke="#000"/><path d="M2 2L11 11M11 2L2 11" stroke="#000" stroke-width="1.15"/></svg>
<div class="ab" style="left:214px;top:68px;width:99px;height:48px;background:#F4F4F0"></div>
<div class="ab" style="left:313px;top:68px;width:1px;height:49px;background:#B4B4B4"></div>
<div class="ab" style="left:214px;top:116px;width:100px;height:1px;background:#B4B4B4"></div>
<div class="ab" style="left:257px;top:85px;width:13px;height:13px;border:1px solid #000"></div>
<div class="ab" style="left:314px;top:68px;width:99px;height:48px;background:#F4F4F0"></div>
<div class="ab" style="left:413px;top:68px;width:1px;height:49px;background:#B4B4B4"></div>
<div class="ab" style="left:314px;top:116px;width:100px;height:1px;background:#B4B4B4"></div>
<div class="ab" style="left:357px;top:85px;width:13px;height:13px;border:1px solid #000"></div>
<div class="ab" style="left:414px;top:68px;width:99px;height:48px;background:#F4F4F0"></div>
<div class="ab" style="left:513px;top:68px;width:1px;height:49px;background:#B4B4B4"></div>
<div class="ab" style="left:414px;top:116px;width:100px;height:1px;background:#B4B4B4"></div>
<div class="ab" style="left:457px;top:85px;width:13px;height:13px;border:1px solid #000"></div>
<div class="ab" style="left:514px;top:68px;width:99px;height:48px;background:#F4F4F0"></div>
<div class="ab" style="left:613px;top:68px;width:1px;height:49px;background:#B4B4B4"></div>
<div class="ab" style="left:514px;top:116px;width:100px;height:1px;background:#B4B4B4"></div>
<div class="ab" style="left:557px;top:85px;width:13px;height:13px;border:1px solid #000"></div>
<div class="ab" style="left:614px;top:68px;width:99px;height:48px;background:#F4F4F0"></div>
<div class="ab" style="left:713px;top:68px;width:1px;height:49px;background:#B4B4B4"></div>
<div class="ab" style="left:614px;top:116px;width:100px;height:1px;background:#B4B4B4"></div>
<div class="ab" style="left:657px;top:85px;width:13px;height:13px;border:1px solid #000"></div>
<div class="ab" style="left:714px;top:68px;width:99px;height:48px;background:#F4F4F0"></div>
<div class="ab" style="left:813px;top:68px;width:1px;height:49px;background:#B4B4B4"></div>
<div class="ab" style="left:714px;top:116px;width:100px;height:1px;background:#B4B4B4"></div>
<div class="ab" style="left:757px;top:85px;width:13px;height:13px;border:1px solid #000"></div>
<div class="ab" style="left:1px;top:117px;width:12px;height:48px;background:#D4D0C8"></div>
<div class="ab" style="left:15px;top:117px;width:98px;height:48px;background:#D4D0C8"></div>
<div class="ab" style="left:0px;top:117px;width:14px;height:1px;background:#fff"></div>
<div class="ab" style="left:14px;top:117px;width:100px;height:1px;background:#fff"></div>
<div class="ab" style="left:0px;top:165px;width:113px;height:1px;background:#808080"></div>
<div class="ab" style="left:18px;top:118px;height:48px;display:flex;align-items:center"><div style="font-size:10.4px;line-height:13px;white-space:nowrap">UC2-Cadastrar<br>clientes</div></div>
<div class="ab" style="left:114px;top:117px;width:99px;height:48px;background:#FFFFFF"></div>
<div class="ab" style="left:213px;top:117px;width:1px;height:49px;background:#B4B4B4"></div>
<div class="ab" style="left:114px;top:165px;width:100px;height:1px;background:#B4B4B4"></div>
<svg class="ab" style="left:157px;top:134px" width="13" height="13"><rect x="0.5" y="0.5" width="12" height="12" fill="none" stroke="#000"/><path d="M2 2L11 11M11 2L2 11" stroke="#000" stroke-width="1.15"/></svg>
<div class="ab" style="left:214px;top:117px;width:99px;height:48px;background:#F4F4F0"></div>
<div class="ab" style="left:313px;top:117px;width:1px;height:49px;background:#B4B4B4"></div>
<div class="ab" style="left:214px;top:165px;width:100px;height:1px;background:#B4B4B4"></div>
<div class="ab" style="left:257px;top:134px;width:13px;height:13px;border:1px solid #000"></div>
<div class="ab" style="left:314px;top:117px;width:99px;height:48px;background:#FFFFFF"></div>
<div class="ab" style="left:413px;top:117px;width:1px;height:49px;background:#B4B4B4"></div>
<div class="ab" style="left:314px;top:165px;width:100px;height:1px;background:#B4B4B4"></div>
<svg class="ab" style="left:357px;top:134px" width="13" height="13"><rect x="0.5" y="0.5" width="12" height="12" fill="none" stroke="#000"/><path d="M2 2L11 11M11 2L2 11" stroke="#000" stroke-width="1.15"/></svg>
<div class="ab" style="left:414px;top:117px;width:99px;height:48px;background:#F4F4F0"></div>
<div class="ab" style="left:513px;top:117px;width:1px;height:49px;background:#B4B4B4"></div>
<div class="ab" style="left:414px;top:165px;width:100px;height:1px;background:#B4B4B4"></div>
<div class="ab" style="left:457px;top:134px;width:13px;height:13px;border:1px solid #000"></div>
<div class="ab" style="left:514px;top:117px;width:99px;height:48px;background:#F4F4F0"></div>
<div class="ab" style="left:613px;top:117px;width:1px;height:49px;background:#B4B4B4"></div>
<div class="ab" style="left:514px;top:165px;width:100px;height:1px;background:#B4B4B4"></div>
<div class="ab" style="left:557px;top:134px;width:13px;height:13px;border:1px solid #000"></div>
<div class="ab" style="left:614px;top:117px;width:99px;height:48px;background:#F4F4F0"></div>
<div class="ab" style="left:713px;top:117px;width:1px;height:49px;background:#B4B4B4"></div>
<div class="ab" style="left:614px;top:165px;width:100px;height:1px;background:#B4B4B4"></div>
<div class="ab" style="left:657px;top:134px;width:13px;height:13px;border:1px solid #000"></div>
<div class="ab" style="left:714px;top:117px;width:99px;height:48px;background:#F4F4F0"></div>
<div class="ab" style="left:813px;top:117px;width:1px;height:49px;background:#B4B4B4"></div>
<div class="ab" style="left:714px;top:165px;width:100px;height:1px;background:#B4B4B4"></div>
<div class="ab" style="left:757px;top:134px;width:13px;height:13px;border:1px solid #000"></div>
<div class="ab" style="left:1px;top:166px;width:12px;height:48px;background:#D4D0C8"></div>
<div class="ab" style="left:15px;top:166px;width:98px;height:48px;background:#D4D0C8"></div>
<div class="ab" style="left:0px;top:166px;width:14px;height:1px;background:#fff"></div>
<div class="ab" style="left:14px;top:166px;width:100px;height:1px;background:#fff"></div>
<div class="ab" style="left:0px;top:214px;width:113px;height:1px;background:#808080"></div>
<div class="ab" style="left:18px;top:167px;height:48px;display:flex;align-items:center"><div style="font-size:10.4px;line-height:13px;white-space:nowrap">UC3-Emitir Notas<br>Fiscal</div></div>
<div class="ab" style="left:114px;top:166px;width:99px;height:48px;background:#F4F4F0"></div>
<div class="ab" style="left:213px;top:166px;width:1px;height:49px;background:#B4B4B4"></div>
<div class="ab" style="left:114px;top:214px;width:100px;height:1px;background:#B4B4B4"></div>
<div class="ab" style="left:157px;top:183px;width:13px;height:13px;border:1px solid #000"></div>
<div class="ab" style="left:214px;top:166px;width:99px;height:48px;background:#F4F4F0"></div>
<div class="ab" style="left:313px;top:166px;width:1px;height:49px;background:#B4B4B4"></div>
<div class="ab" style="left:214px;top:214px;width:100px;height:1px;background:#B4B4B4"></div>
<div class="ab" style="left:257px;top:183px;width:13px;height:13px;border:1px solid #000"></div>
<div class="ab" style="left:314px;top:166px;width:99px;height:48px;background:#FFFFFF"></div>
<div class="ab" style="left:413px;top:166px;width:1px;height:49px;background:#B4B4B4"></div>
<div class="ab" style="left:314px;top:214px;width:100px;height:1px;background:#B4B4B4"></div>
<svg class="ab" style="left:357px;top:183px" width="13" height="13"><rect x="0.5" y="0.5" width="12" height="12" fill="none" stroke="#000"/><path d="M2 2L11 11M11 2L2 11" stroke="#000" stroke-width="1.15"/></svg>
<div class="ab" style="left:414px;top:166px;width:99px;height:48px;background:#FFFFFF"></div>
<div class="ab" style="left:513px;top:166px;width:1px;height:49px;background:#B4B4B4"></div>
<div class="ab" style="left:414px;top:214px;width:100px;height:1px;background:#B4B4B4"></div>
<svg class="ab" style="left:457px;top:183px" width="13" height="13"><rect x="0.5" y="0.5" width="12" height="12" fill="none" stroke="#000"/><path d="M2 2L11 11M11 2L2 11" stroke="#000" stroke-width="1.15"/></svg>
<div class="ab" style="left:514px;top:166px;width:99px;height:48px;background:#F4F4F0"></div>
<div class="ab" style="left:613px;top:166px;width:1px;height:49px;background:#B4B4B4"></div>
<div class="ab" style="left:514px;top:214px;width:100px;height:1px;background:#B4B4B4"></div>
<div class="ab" style="left:557px;top:183px;width:13px;height:13px;border:1px solid #000"></div>
<div class="ab" style="left:614px;top:166px;width:99px;height:48px;background:#FFFFC4"></div>
<div class="ab" style="left:713px;top:166px;width:1px;height:49px;background:#B4B4B4"></div>
<div class="ab" style="left:614px;top:214px;width:100px;height:1px;background:#B4B4B4"></div>
<svg class="ab" style="left:657px;top:183px" width="13" height="13"><rect x="0.5" y="0.5" width="12" height="12" fill="none" stroke="#000"/><path d="M2 2L11 11M11 2L2 11" stroke="#000" stroke-width="1.15"/></svg>
<div class="ab" style="left:714px;top:166px;width:99px;height:48px;background:#F4F4F0"></div>
<div class="ab" style="left:813px;top:166px;width:1px;height:49px;background:#B4B4B4"></div>
<div class="ab" style="left:714px;top:214px;width:100px;height:1px;background:#B4B4B4"></div>
<div class="ab" style="left:757px;top:183px;width:13px;height:13px;border:1px solid #000"></div>
<div class="ab" style="left:1px;top:215px;width:12px;height:48px;background:#D4D0C8"></div>
<div class="ab" style="left:15px;top:215px;width:98px;height:48px;background:#D4D0C8"></div>
<div class="ab" style="left:0px;top:215px;width:14px;height:1px;background:#fff"></div>
<div class="ab" style="left:14px;top:215px;width:100px;height:1px;background:#fff"></div>
<div class="ab" style="left:0px;top:263px;width:113px;height:1px;background:#808080"></div>
<div class="ab" style="left:18px;top:216px;height:48px;display:flex;align-items:center"><div style="font-size:10.4px;line-height:13px;white-space:nowrap">UC4-Calcular<br>comissão</div></div>
<div class="ab" style="left:114px;top:215px;width:99px;height:48px;background:#F4F4F0"></div>
<div class="ab" style="left:213px;top:215px;width:1px;height:49px;background:#B4B4B4"></div>
<div class="ab" style="left:114px;top:263px;width:100px;height:1px;background:#B4B4B4"></div>
<div class="ab" style="left:157px;top:232px;width:13px;height:13px;border:1px solid #000"></div>
<div class="ab" style="left:214px;top:215px;width:99px;height:48px;background:#F4F4F0"></div>
<div class="ab" style="left:313px;top:215px;width:1px;height:49px;background:#B4B4B4"></div>
<div class="ab" style="left:214px;top:263px;width:100px;height:1px;background:#B4B4B4"></div>
<div class="ab" style="left:257px;top:232px;width:13px;height:13px;border:1px solid #000"></div>
<div class="ab" style="left:314px;top:215px;width:99px;height:48px;background:#F4F4F0"></div>
<div class="ab" style="left:413px;top:215px;width:1px;height:49px;background:#B4B4B4"></div>
<div class="ab" style="left:314px;top:263px;width:100px;height:1px;background:#B4B4B4"></div>
<div class="ab" style="left:357px;top:232px;width:13px;height:13px;border:1px solid #000"></div>
<div class="ab" style="left:414px;top:215px;width:99px;height:48px;background:#FFFFFF"></div>
<div class="ab" style="left:513px;top:215px;width:1px;height:49px;background:#B4B4B4"></div>
<div class="ab" style="left:414px;top:263px;width:100px;height:1px;background:#B4B4B4"></div>
<svg class="ab" style="left:457px;top:232px" width="13" height="13"><rect x="0.5" y="0.5" width="12" height="12" fill="none" stroke="#000"/><path d="M2 2L11 11M11 2L2 11" stroke="#000" stroke-width="1.15"/></svg>
<div class="ab" style="left:514px;top:215px;width:99px;height:48px;background:#F4F4F0"></div>
<div class="ab" style="left:613px;top:215px;width:1px;height:49px;background:#B4B4B4"></div>
<div class="ab" style="left:514px;top:263px;width:100px;height:1px;background:#B4B4B4"></div>
<div class="ab" style="left:557px;top:232px;width:13px;height:13px;border:1px solid #000"></div>
<div class="ab" style="left:614px;top:215px;width:99px;height:48px;background:#F4F4F0"></div>
<div class="ab" style="left:713px;top:215px;width:1px;height:49px;background:#B4B4B4"></div>
<div class="ab" style="left:614px;top:263px;width:100px;height:1px;background:#B4B4B4"></div>
<div class="ab" style="left:657px;top:232px;width:13px;height:13px;border:1px solid #000"></div>
<div class="ab" style="left:714px;top:215px;width:99px;height:48px;background:#F4F4F0"></div>
<div class="ab" style="left:813px;top:215px;width:1px;height:49px;background:#B4B4B4"></div>
<div class="ab" style="left:714px;top:263px;width:100px;height:1px;background:#B4B4B4"></div>
<div class="ab" style="left:757px;top:232px;width:13px;height:13px;border:1px solid #000"></div>
<div class="ab" style="left:1px;top:264px;width:12px;height:48px;background:#D4D0C8"></div>
<div class="ab" style="left:15px;top:264px;width:98px;height:48px;background:#D4D0C8"></div>
<div class="ab" style="left:0px;top:264px;width:14px;height:1px;background:#fff"></div>
<div class="ab" style="left:14px;top:264px;width:100px;height:1px;background:#fff"></div>
<div class="ab" style="left:0px;top:312px;width:113px;height:1px;background:#808080"></div>
<div class="ab" style="left:18px;top:265px;height:48px;display:flex;align-items:center"><div style="font-size:10.4px;line-height:13px;white-space:nowrap">UC5-Cadastrar<br>vendedor</div></div>
<div class="ab" style="left:114px;top:264px;width:99px;height:48px;background:#F4F4F0"></div>
<div class="ab" style="left:213px;top:264px;width:1px;height:49px;background:#B4B4B4"></div>
<div class="ab" style="left:114px;top:312px;width:100px;height:1px;background:#B4B4B4"></div>
<div class="ab" style="left:157px;top:281px;width:13px;height:13px;border:1px solid #000"></div>
<div class="ab" style="left:214px;top:264px;width:99px;height:48px;background:#F4F4F0"></div>
<div class="ab" style="left:313px;top:264px;width:1px;height:49px;background:#B4B4B4"></div>
<div class="ab" style="left:214px;top:312px;width:100px;height:1px;background:#B4B4B4"></div>
<div class="ab" style="left:257px;top:281px;width:13px;height:13px;border:1px solid #000"></div>
<div class="ab" style="left:314px;top:264px;width:99px;height:48px;background:#FFFFFF"></div>
<div class="ab" style="left:413px;top:264px;width:1px;height:49px;background:#B4B4B4"></div>
<div class="ab" style="left:314px;top:312px;width:100px;height:1px;background:#B4B4B4"></div>
<svg class="ab" style="left:357px;top:281px" width="13" height="13"><rect x="0.5" y="0.5" width="12" height="12" fill="none" stroke="#000"/><path d="M2 2L11 11M11 2L2 11" stroke="#000" stroke-width="1.15"/></svg>
<div class="ab" style="left:414px;top:264px;width:99px;height:48px;background:#FFFFC4"></div>
<div class="ab" style="left:513px;top:264px;width:1px;height:49px;background:#B4B4B4"></div>
<div class="ab" style="left:414px;top:312px;width:100px;height:1px;background:#B4B4B4"></div>
<svg class="ab" style="left:457px;top:281px" width="13" height="13"><rect x="0.5" y="0.5" width="12" height="12" fill="none" stroke="#000"/><path d="M2 2L11 11M11 2L2 11" stroke="#000" stroke-width="1.15"/></svg>
<div class="ab" style="left:514px;top:264px;width:99px;height:48px;background:#F4F4F0"></div>
<div class="ab" style="left:613px;top:264px;width:1px;height:49px;background:#B4B4B4"></div>
<div class="ab" style="left:514px;top:312px;width:100px;height:1px;background:#B4B4B4"></div>
<div class="ab" style="left:557px;top:281px;width:13px;height:13px;border:1px solid #000"></div>
<div class="ab" style="left:614px;top:264px;width:99px;height:48px;background:#F4F4F0"></div>
<div class="ab" style="left:713px;top:264px;width:1px;height:49px;background:#B4B4B4"></div>
<div class="ab" style="left:614px;top:312px;width:100px;height:1px;background:#B4B4B4"></div>
<div class="ab" style="left:657px;top:281px;width:13px;height:13px;border:1px solid #000"></div>
<div class="ab" style="left:714px;top:264px;width:99px;height:48px;background:#F4F4F0"></div>
<div class="ab" style="left:813px;top:264px;width:1px;height:49px;background:#B4B4B4"></div>
<div class="ab" style="left:714px;top:312px;width:100px;height:1px;background:#B4B4B4"></div>
<div class="ab" style="left:757px;top:281px;width:13px;height:13px;border:1px solid #000"></div>
<div class="ab" style="left:1px;top:313px;width:12px;height:48px;background:#D4D0C8"></div>
<div class="ab" style="left:15px;top:313px;width:98px;height:48px;background:#E9E9E6"></div>
<div class="ab" style="left:0px;top:313px;width:14px;height:1px;background:#fff"></div>
<div class="ab" style="left:14px;top:313px;width:100px;height:1px;background:#fff"></div>
<div class="ab" style="left:0px;top:361px;width:113px;height:1px;background:#808080"></div>
<div class="ab" style="left:18px;top:314px;height:48px;display:flex;align-items:center"><div style="font-size:10.4px;line-height:13px;white-space:nowrap">UC7-Consultas e<br>relatórios</div></div>
<div class="ab" style="left:114px;top:313px;width:99px;height:48px;background:#F4F4F0"></div>
<div class="ab" style="left:213px;top:313px;width:1px;height:49px;background:#B4B4B4"></div>
<div class="ab" style="left:114px;top:361px;width:100px;height:1px;background:#B4B4B4"></div>
<div class="ab" style="left:157px;top:330px;width:13px;height:13px;border:1px solid #000"></div>
<div class="ab" style="left:214px;top:313px;width:99px;height:48px;background:#F4F4F0"></div>
<div class="ab" style="left:313px;top:313px;width:1px;height:49px;background:#B4B4B4"></div>
<div class="ab" style="left:214px;top:361px;width:100px;height:1px;background:#B4B4B4"></div>
<div class="ab" style="left:257px;top:330px;width:13px;height:13px;border:1px solid #000"></div>
<div class="ab" style="left:314px;top:313px;width:99px;height:48px;background:#F4F4F0"></div>
<div class="ab" style="left:413px;top:313px;width:1px;height:49px;background:#B4B4B4"></div>
<div class="ab" style="left:314px;top:361px;width:100px;height:1px;background:#B4B4B4"></div>
<div class="ab" style="left:357px;top:330px;width:13px;height:13px;border:1px solid #000"></div>
<div class="ab" style="left:414px;top:313px;width:99px;height:48px;background:#F4F4F0"></div>
<div class="ab" style="left:513px;top:313px;width:1px;height:49px;background:#B4B4B4"></div>
<div class="ab" style="left:414px;top:361px;width:100px;height:1px;background:#B4B4B4"></div>
<div class="ab" style="left:457px;top:330px;width:13px;height:13px;border:1px solid #000"></div>
<div class="ab" style="left:514px;top:313px;width:99px;height:48px;background:#F4F4F0"></div>
<div class="ab" style="left:613px;top:313px;width:1px;height:49px;background:#B4B4B4"></div>
<div class="ab" style="left:514px;top:361px;width:100px;height:1px;background:#B4B4B4"></div>
<div class="ab" style="left:557px;top:330px;width:13px;height:13px;border:1px solid #000"></div>
<div class="ab" style="left:614px;top:313px;width:99px;height:48px;background:#F4F4F0"></div>
<div class="ab" style="left:713px;top:313px;width:1px;height:49px;background:#B4B4B4"></div>
<div class="ab" style="left:614px;top:361px;width:100px;height:1px;background:#B4B4B4"></div>
<div class="ab" style="left:657px;top:330px;width:13px;height:13px;border:1px solid #000"></div>
<div class="ab" style="left:714px;top:313px;width:99px;height:48px;background:#F4F4F0"></div>
<div class="ab" style="left:813px;top:313px;width:1px;height:49px;background:#B4B4B4"></div>
<div class="ab" style="left:714px;top:361px;width:100px;height:1px;background:#B4B4B4"></div>
<div class="ab" style="left:757px;top:330px;width:13px;height:13px;border:1px solid #000"></div>
<svg class="ab" style="left:4px;top:331px" width="6" height="12"><path d="M0 0L6 6L0 12Z" fill="#000"/></svg>
</div>
<div class="ab" style="left:260px;top:654px;width:762px;height:16px;background-image:repeating-conic-gradient(#fff 0 25%, #D4D0C8 0 50%);background-size:2px 2px"></div>
<div class="ab" style="left:260px;top:654px;width:16px;height:16px;background:#D4D0C8;border-top:1px solid #D4D0C8;border-left:1px solid #D4D0C8;border-right:1px solid #404040;border-bottom:1px solid #404040"><div style="position:absolute;left:0;top:0;right:0;bottom:0;border-top:1px solid #fff;border-left:1px solid #fff;border-right:1px solid #808080;border-bottom:1px solid #808080"></div></div>
<div class="ab" style="left:276px;top:654px;width:365px;height:16px;background:#D4D0C8;border-top:1px solid #D4D0C8;border-left:1px solid #D4D0C8;border-right:1px solid #404040;border-bottom:1px solid #404040"><div style="position:absolute;left:0;top:0;right:0;bottom:0;border-top:1px solid #fff;border-left:1px solid #fff;border-right:1px solid #808080;border-bottom:1px solid #808080"></div></div>
<div class="ab" style="left:1006px;top:654px;width:16px;height:16px;background:#D4D0C8;border-top:1px solid #D4D0C8;border-left:1px solid #D4D0C8;border-right:1px solid #404040;border-bottom:1px solid #404040"><div style="position:absolute;left:0;top:0;right:0;bottom:0;border-top:1px solid #fff;border-left:1px solid #fff;border-right:1px solid #808080;border-bottom:1px solid #808080"></div></div>
<svg class="ab" style="left:265px;top:658px" width="4" height="7"><path d="M4 0V7L0.5 3.5Z" fill="#000"/></svg>
<svg class="ab" style="left:1012px;top:658px" width="4" height="7"><path d="M0 0V7L3.5 3.5Z" fill="#000"/></svg>
<div class="t" style="left:274px;top:678px;font-weight:bold;font-size:11.6px">UC7-Consultas e relatórios</div>
<div class="t" style="left:274px;top:697px;font-weight:bold;font-size:11.6px">RF7-Cálculo de Comissão</div>
<div class="ab" style="left:807px;top:685px;width:25px;height:25px;background:#FFFFC0;border:1px solid #807858"></div>
<div class="t" style="left:838px;top:690px;font-size:10.4px">- Ítem modificado</div>
<div class="ab" style="left:0px;top:723px;width:450px;height:1px;background:#808080"></div>
<div class="ab" style="left:0px;top:723px;width:1px;height:17px;background:#808080"></div>
<div class="ab" style="left:0px;top:739px;width:450px;height:1px;background:#fff"></div>
<div class="ab" style="left:449px;top:723px;width:1px;height:17px;background:#fff"></div>
<div class="t" style="left:2px;top:725px;font-size:10.5px">Demonstração - ERP e Gestão de Vendas</div>
<div class="ab" style="left:452px;top:723px;width:572px;height:1px;background:#808080"></div>
<div class="ab" style="left:452px;top:723px;width:1px;height:17px;background:#808080"></div>
<div class="ab" style="left:452px;top:739px;width:572px;height:1px;background:#fff"></div>
<div class="t" style="left:454px;top:725px">clayton</div>
<div class="ab" style="left:0px;top:741px;width:1024px;height:1px;background:#fff"></div>
</body></html>
